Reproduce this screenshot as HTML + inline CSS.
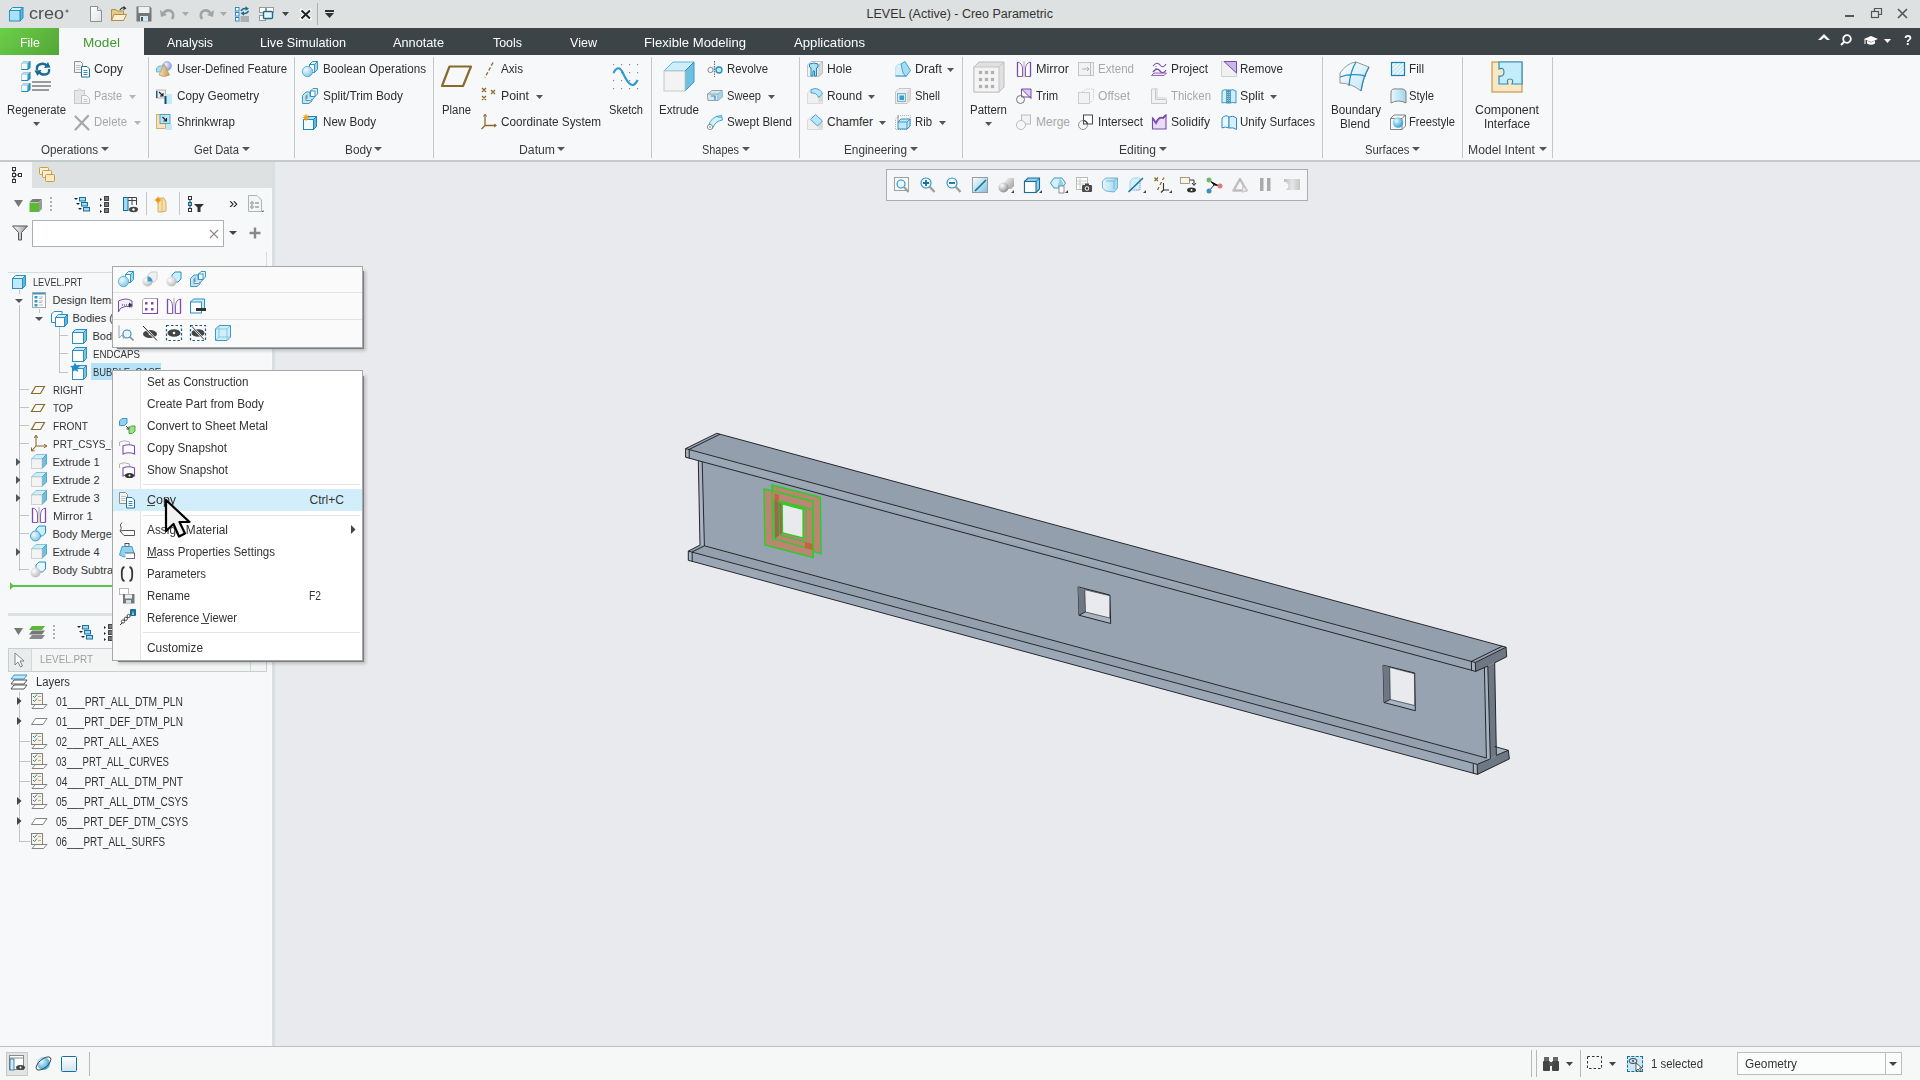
<!DOCTYPE html>
<html><head><meta charset="utf-8"><title>Creo Parametric</title>
<style>
html,body{margin:0;padding:0;width:1920px;height:1080px;overflow:hidden;background:#e9eaed;font-family:'Liberation Sans', sans-serif;}
span{white-space:pre;}
svg{overflow:visible;}
</style></head><body>
<svg width="0" height="0" style="position:absolute">
<defs>
<linearGradient id="gdoc" x1="0" y1="0" x2="1" y2="1"><stop offset="0" stop-color="#ffffff"/><stop offset="1" stop-color="#d9e3ea"/></linearGradient>
<radialGradient id="gsph" cx="0.35" cy="0.35" r="0.7"><stop offset="0" stop-color="#eef0ff"/><stop offset="1" stop-color="#8e9ad8"/></radialGradient>
<radialGradient id="gsph2" cx="0.35" cy="0.35" r="0.7"><stop offset="0" stop-color="#f2fbff"/><stop offset="1" stop-color="#7fc5e4"/></radialGradient>
<radialGradient id="gsph3" cx="0.35" cy="0.35" r="0.7"><stop offset="0" stop-color="#e5f8ff"/><stop offset="1" stop-color="#2f9fd2"/></radialGradient>
<radialGradient id="gsphw" cx="0.35" cy="0.35" r="0.7"><stop offset="0" stop-color="#ffffff"/><stop offset="1" stop-color="#b8b8b8"/></radialGradient>
<linearGradient id="gcone" x1="0" y1="0" x2="1" y2="0"><stop offset="0" stop-color="#f3dfb3"/><stop offset="1" stop-color="#c59d5a"/></linearGradient>
<linearGradient id="gbb" x1="0" y1="0" x2="1" y2="1"><stop offset="0" stop-color="#ffffff"/><stop offset="1" stop-color="#bfe6f6"/></linearGradient>
<linearGradient id="gsty" x1="0" y1="0" x2="1" y2="0"><stop offset="0" stop-color="#e8f7fd"/><stop offset="1" stop-color="#9fd6ee"/></linearGradient>
<pattern id="gfill" width="3" height="3" patternUnits="userSpaceOnUse" patternTransform="rotate(45)"><rect width="3" height="3" fill="#bfe6f6"/><rect width="1.2" height="3" fill="#ffffff"/></pattern>
<pattern id="ghatch" width="2" height="2" patternUnits="userSpaceOnUse"><rect width="2" height="2" fill="#5aa7cf"/><rect width="1" height="1" fill="#ffffff"/></pattern>
<linearGradient id="gfile" x1="0" y1="0" x2="1" y2="1"><stop offset="0" stop-color="#6fd04a"/><stop offset="1" stop-color="#4fa336"/></linearGradient>
</defs></svg>
<div style="position:absolute;left:0px;top:0px;width:1920px;height:28px;background:#dde1e1"></div>
<div style="position:absolute;left:0px;top:28px;width:1920px;height:27px;background:#3c4447"></div>
<div style="position:absolute;left:0px;top:28px;width:59px;height:27px;background:linear-gradient(135deg,#6ccf48,#52a637)"></div>
<div style="position:absolute;left:59px;top:28px;width:85px;height:27px;background:#f7f8fa"></div>
<div style="position:absolute;left:0px;top:55px;width:1920px;height:105px;background:#f7f8fa"></div>
<div style="position:absolute;left:0px;top:160px;width:1920px;height:2px;background:#c3cbcb"></div>
<div style="position:absolute;left:0px;top:162px;width:272px;height:884px;background:#f7f8fa"></div>
<div style="position:absolute;left:271px;top:162px;width:1px;height:884px;background:#f9fbfa"></div>
<div style="position:absolute;left:272px;top:162px;width:3px;height:884px;background:#d9dfde"></div>
<div style="position:absolute;left:275px;top:162px;width:1645px;height:884px;background:#e9eaed"></div>
<div style="position:absolute;left:0px;top:1046px;width:1920px;height:1px;background:#b7c2c2"></div>
<div style="position:absolute;left:0px;top:1047px;width:1920px;height:33px;background:#f6f8f8"></div>
<span style="position:absolute;left:866.5px;top:8px;font-size:12.5px;line-height:12.5px;color:#333;font-weight:400;">LEVEL (Active) - Creo Parametric</span>
<span style="position:absolute;left:29.0px;top:5px;font-size:16.5px;line-height:16.5px;color:#505050;font-weight:400;transform:scaleX(1.0900);transform-origin:0 0;">creo</span>
<span style="position:absolute;left:19.5px;top:36px;font-size:13px;line-height:13px;color:#ffffff;font-weight:400;transform:scaleX(0.9545);transform-origin:0 0;">File</span>
<span style="position:absolute;left:82.5px;top:36px;font-size:13px;line-height:13px;color:#3f9a2c;font-weight:400;transform:scaleX(1.0446);transform-origin:0 0;">Model</span>
<span style="position:absolute;left:166.5px;top:36px;font-size:13px;line-height:13px;color:#ffffff;font-weight:400;transform:scaleX(0.9500);transform-origin:0 0;">Analysis</span>
<span style="position:absolute;left:259.5px;top:36px;font-size:13px;line-height:13px;color:#ffffff;font-weight:400;transform:scaleX(0.9755);transform-origin:0 0;">Live Simulation</span>
<span style="position:absolute;left:392.5px;top:36px;font-size:13px;line-height:13px;color:#ffffff;font-weight:400;transform:scaleX(0.9799);transform-origin:0 0;">Annotate</span>
<span style="position:absolute;left:492.5px;top:36px;font-size:13px;line-height:13px;color:#ffffff;font-weight:400;transform:scaleX(0.9552);transform-origin:0 0;">Tools</span>
<span style="position:absolute;left:569.5px;top:36px;font-size:13px;line-height:13px;color:#ffffff;font-weight:400;transform:scaleX(0.9659);transform-origin:0 0;">View</span>
<span style="position:absolute;left:644.0px;top:36px;font-size:13px;line-height:13px;color:#ffffff;font-weight:400;transform:scaleX(1.0082);transform-origin:0 0;">Flexible Modeling</span>
<span style="position:absolute;left:793.5px;top:36px;font-size:13px;line-height:13px;color:#ffffff;font-weight:400;transform:scaleX(1.0127);transform-origin:0 0;">Applications</span>
<div style="position:absolute;left:148px;top:57px;width:1px;height:101px;background:#c4c8cb"></div>
<div style="position:absolute;left:294px;top:57px;width:1px;height:101px;background:#c4c8cb"></div>
<div style="position:absolute;left:433px;top:57px;width:1px;height:101px;background:#c4c8cb"></div>
<div style="position:absolute;left:651px;top:57px;width:1px;height:101px;background:#c4c8cb"></div>
<div style="position:absolute;left:799px;top:57px;width:1px;height:101px;background:#c4c8cb"></div>
<div style="position:absolute;left:962px;top:57px;width:1px;height:101px;background:#c4c8cb"></div>
<div style="position:absolute;left:1322px;top:57px;width:1px;height:101px;background:#c4c8cb"></div>
<div style="position:absolute;left:1462px;top:57px;width:1px;height:101px;background:#c4c8cb"></div>
<div style="position:absolute;left:1552px;top:57px;width:1px;height:101px;background:#c4c8cb"></div>
<span style="position:absolute;left:40.5px;top:144px;font-size:12px;line-height:12px;color:#3a3a3a;font-weight:400;transform:scaleX(0.9710);transform-origin:0 0;">Operations</span>
<span style="position:absolute;left:194.0px;top:144px;font-size:12px;line-height:12px;color:#3a3a3a;font-weight:400;transform:scaleX(0.9369);transform-origin:0 0;">Get Data</span>
<span style="position:absolute;left:345.0px;top:144px;font-size:12px;line-height:12px;color:#3a3a3a;font-weight:400;transform:scaleX(0.9869);transform-origin:0 0;">Body</span>
<span style="position:absolute;left:519.0px;top:144px;font-size:12px;line-height:12px;color:#3a3a3a;font-weight:400;transform:scaleX(1.0186);transform-origin:0 0;">Datum</span>
<span style="position:absolute;left:702.0px;top:144px;font-size:12px;line-height:12px;color:#3a3a3a;font-weight:400;transform:scaleX(0.9090);transform-origin:0 0;">Shapes</span>
<span style="position:absolute;left:844.0px;top:144px;font-size:12px;line-height:12px;color:#3a3a3a;font-weight:400;transform:scaleX(0.9834);transform-origin:0 0;">Engineering</span>
<span style="position:absolute;left:1119.0px;top:144px;font-size:12px;line-height:12px;color:#3a3a3a;font-weight:400;transform:scaleX(1.0081);transform-origin:0 0;">Editing</span>
<span style="position:absolute;left:1364.5px;top:144px;font-size:12px;line-height:12px;color:#3a3a3a;font-weight:400;transform:scaleX(0.9396);transform-origin:0 0;">Surfaces</span>
<span style="position:absolute;left:1468.0px;top:144px;font-size:12px;line-height:12px;color:#3a3a3a;font-weight:400;transform:scaleX(1.0144);transform-origin:0 0;">Model Intent</span>
<span style="position:absolute;left:7.0px;top:104px;font-size:12px;line-height:12px;color:#2e2e2e;font-weight:400;transform:scaleX(0.9407);transform-origin:0 0;">Regenerate</span>
<span style="position:absolute;left:442.0px;top:104px;font-size:12px;line-height:12px;color:#2e2e2e;font-weight:400;transform:scaleX(0.9445);transform-origin:0 0;">Plane</span>
<span style="position:absolute;left:609.0px;top:104px;font-size:12px;line-height:12px;color:#2e2e2e;font-weight:400;transform:scaleX(0.9267);transform-origin:0 0;">Sketch</span>
<span style="position:absolute;left:659.0px;top:104px;font-size:12px;line-height:12px;color:#2e2e2e;font-weight:400;transform:scaleX(0.9671);transform-origin:0 0;">Extrude</span>
<span style="position:absolute;left:970.0px;top:104px;font-size:12px;line-height:12px;color:#2e2e2e;font-weight:400;transform:scaleX(0.9560);transform-origin:0 0;">Pattern</span>
<span style="position:absolute;left:1330.5px;top:104px;font-size:12px;line-height:12px;color:#2e2e2e;font-weight:400;transform:scaleX(0.9732);transform-origin:0 0;">Boundary</span>
<span style="position:absolute;left:1340.0px;top:118px;font-size:12px;line-height:12px;color:#2e2e2e;font-weight:400;transform:scaleX(0.9771);transform-origin:0 0;">Blend</span>
<span style="position:absolute;left:1475.0px;top:104px;font-size:12px;line-height:12px;color:#2e2e2e;font-weight:400;transform:scaleX(1.0315);transform-origin:0 0;">Component</span>
<span style="position:absolute;left:1484.0px;top:118px;font-size:12px;line-height:12px;color:#2e2e2e;font-weight:400;transform:scaleX(0.9849);transform-origin:0 0;">Interface</span>
<span style="position:absolute;left:94.0px;top:63px;font-size:12px;line-height:12px;color:#2e2e2e;font-weight:400;transform:scaleX(1.0351);transform-origin:0 0;">Copy</span>
<span style="position:absolute;left:94.0px;top:90px;font-size:12px;line-height:12px;color:#a8a8a8;font-weight:400;transform:scaleX(0.9124);transform-origin:0 0;">Paste</span>
<span style="position:absolute;left:94.0px;top:116px;font-size:12px;line-height:12px;color:#a8a8a8;font-weight:400;transform:scaleX(0.9514);transform-origin:0 0;">Delete</span>
<span style="position:absolute;left:177.0px;top:63px;font-size:12px;line-height:12px;color:#2e2e2e;font-weight:400;transform:scaleX(0.9533);transform-origin:0 0;">User-Defined Feature</span>
<span style="position:absolute;left:177.0px;top:90px;font-size:12px;line-height:12px;color:#2e2e2e;font-weight:400;transform:scaleX(0.9758);transform-origin:0 0;">Copy Geometry</span>
<span style="position:absolute;left:177.0px;top:116px;font-size:12px;line-height:12px;color:#2e2e2e;font-weight:400;transform:scaleX(0.9662);transform-origin:0 0;">Shrinkwrap</span>
<span style="position:absolute;left:322.5px;top:63px;font-size:12px;line-height:12px;color:#2e2e2e;font-weight:400;transform:scaleX(0.9710);transform-origin:0 0;">Boolean Operations</span>
<span style="position:absolute;left:322.5px;top:90px;font-size:12px;line-height:12px;color:#2e2e2e;font-weight:400;transform:scaleX(0.9888);transform-origin:0 0;">Split/Trim Body</span>
<span style="position:absolute;left:322.5px;top:116px;font-size:12px;line-height:12px;color:#2e2e2e;font-weight:400;transform:scaleX(0.9689);transform-origin:0 0;">New Body</span>
<span style="position:absolute;left:501.0px;top:63px;font-size:12px;line-height:12px;color:#2e2e2e;font-weight:400;transform:scaleX(0.9704);transform-origin:0 0;">Axis</span>
<span style="position:absolute;left:501.0px;top:90px;font-size:12px;line-height:12px;color:#2e2e2e;font-weight:400;transform:scaleX(1.0234);transform-origin:0 0;">Point</span>
<span style="position:absolute;left:501.0px;top:116px;font-size:12px;line-height:12px;color:#2e2e2e;font-weight:400;transform:scaleX(0.9799);transform-origin:0 0;">Coordinate System</span>
<span style="position:absolute;left:727.0px;top:63px;font-size:12px;line-height:12px;color:#2e2e2e;font-weight:400;transform:scaleX(0.9456);transform-origin:0 0;">Revolve</span>
<span style="position:absolute;left:727.0px;top:90px;font-size:12px;line-height:12px;color:#2e2e2e;font-weight:400;transform:scaleX(0.9264);transform-origin:0 0;">Sweep</span>
<span style="position:absolute;left:727.0px;top:116px;font-size:12px;line-height:12px;color:#2e2e2e;font-weight:400;transform:scaleX(0.9645);transform-origin:0 0;">Swept Blend</span>
<span style="position:absolute;left:827.0px;top:63px;font-size:12px;line-height:12px;color:#2e2e2e;font-weight:400;transform:scaleX(1.0127);transform-origin:0 0;">Hole</span>
<span style="position:absolute;left:827.0px;top:90px;font-size:12px;line-height:12px;color:#2e2e2e;font-weight:400;transform:scaleX(0.9894);transform-origin:0 0;">Round</span>
<span style="position:absolute;left:827.0px;top:116px;font-size:12px;line-height:12px;color:#2e2e2e;font-weight:400;">Chamfer</span>
<span style="position:absolute;left:915.0px;top:63px;font-size:12px;line-height:12px;color:#2e2e2e;font-weight:400;transform:scaleX(1.0378);transform-origin:0 0;">Draft</span>
<span style="position:absolute;left:915.0px;top:90px;font-size:12px;line-height:12px;color:#2e2e2e;font-weight:400;transform:scaleX(0.9368);transform-origin:0 0;">Shell</span>
<span style="position:absolute;left:915.0px;top:116px;font-size:12px;line-height:12px;color:#2e2e2e;font-weight:400;transform:scaleX(0.9436);transform-origin:0 0;">Rib</span>
<span style="position:absolute;left:1036.0px;top:63px;font-size:12px;line-height:12px;color:#2e2e2e;font-weight:400;transform:scaleX(1.0534);transform-origin:0 0;">Mirror</span>
<span style="position:absolute;left:1036.0px;top:90px;font-size:12px;line-height:12px;color:#2e2e2e;font-weight:400;transform:scaleX(0.9343);transform-origin:0 0;">Trim</span>
<span style="position:absolute;left:1036.0px;top:116px;font-size:12px;line-height:12px;color:#a8a8a8;font-weight:400;">Merge</span>
<span style="position:absolute;left:1098.0px;top:63px;font-size:12px;line-height:12px;color:#a8a8a8;font-weight:400;transform:scaleX(0.9636);transform-origin:0 0;">Extend</span>
<span style="position:absolute;left:1098.0px;top:90px;font-size:12px;line-height:12px;color:#a8a8a8;font-weight:400;transform:scaleX(1.0064);transform-origin:0 0;">Offset</span>
<span style="position:absolute;left:1098.0px;top:116px;font-size:12px;line-height:12px;color:#2e2e2e;font-weight:400;transform:scaleX(0.9776);transform-origin:0 0;">Intersect</span>
<span style="position:absolute;left:1171.0px;top:63px;font-size:12px;line-height:12px;color:#2e2e2e;font-weight:400;transform:scaleX(0.9904);transform-origin:0 0;">Project</span>
<span style="position:absolute;left:1171.0px;top:90px;font-size:12px;line-height:12px;color:#a8a8a8;font-weight:400;transform:scaleX(0.9517);transform-origin:0 0;">Thicken</span>
<span style="position:absolute;left:1171.0px;top:116px;font-size:12px;line-height:12px;color:#2e2e2e;font-weight:400;transform:scaleX(1.0081);transform-origin:0 0;">Solidify</span>
<span style="position:absolute;left:1240.0px;top:63px;font-size:12px;line-height:12px;color:#2e2e2e;font-weight:400;transform:scaleX(0.9622);transform-origin:0 0;">Remove</span>
<span style="position:absolute;left:1240.0px;top:90px;font-size:12px;line-height:12px;color:#2e2e2e;font-weight:400;transform:scaleX(1.0281);transform-origin:0 0;">Split</span>
<span style="position:absolute;left:1240.0px;top:116px;font-size:12px;line-height:12px;color:#2e2e2e;font-weight:400;transform:scaleX(0.9612);transform-origin:0 0;">Unify Surfaces</span>
<span style="position:absolute;left:1409.0px;top:63px;font-size:12px;line-height:12px;color:#2e2e2e;font-weight:400;transform:scaleX(0.9786);transform-origin:0 0;">Fill</span>
<span style="position:absolute;left:1409.0px;top:90px;font-size:12px;line-height:12px;color:#2e2e2e;font-weight:400;transform:scaleX(0.9368);transform-origin:0 0;">Style</span>
<span style="position:absolute;left:1409.0px;top:116px;font-size:12px;line-height:12px;color:#2e2e2e;font-weight:400;transform:scaleX(0.9319);transform-origin:0 0;">Freestyle</span>
<div style="position:absolute;left:91px;top:363px;width:70px;height:17px;background:#b5e2f8"></div>
<span style="position:absolute;left:32.5px;top:277px;font-size:11px;line-height:11px;color:#333333;font-weight:400;transform:scaleX(0.8374);transform-origin:0 0;">LEVEL.PRT</span>
<span style="position:absolute;left:52.5px;top:295px;font-size:11px;line-height:11px;color:#333333;font-weight:400;">Design Items</span>
<span style="position:absolute;left:72.5px;top:313px;font-size:11px;line-height:11px;color:#333333;font-weight:400;">Bodies (3)</span>
<span style="position:absolute;left:92.5px;top:331px;font-size:11px;line-height:11px;color:#333333;font-weight:400;">Body 1</span>
<span style="position:absolute;left:92.5px;top:349px;font-size:11px;line-height:11px;color:#333333;font-weight:400;transform:scaleX(0.8837);transform-origin:0 0;">ENDCAPS</span>
<span style="position:absolute;left:92.5px;top:367px;font-size:11px;line-height:11px;color:#333333;font-weight:400;transform:scaleX(0.8555);transform-origin:0 0;">BUBBLE_CASE</span>
<span style="position:absolute;left:52.5px;top:385px;font-size:11px;line-height:11px;color:#333333;font-weight:400;transform:scaleX(0.8909);transform-origin:0 0;">RIGHT</span>
<span style="position:absolute;left:52.5px;top:403px;font-size:11px;line-height:11px;color:#333333;font-weight:400;transform:scaleX(0.8920);transform-origin:0 0;">TOP</span>
<span style="position:absolute;left:52.5px;top:421px;font-size:11px;line-height:11px;color:#333333;font-weight:400;transform:scaleX(0.9237);transform-origin:0 0;">FRONT</span>
<span style="position:absolute;left:52.5px;top:439px;font-size:11px;line-height:11px;color:#333333;font-weight:400;transform:scaleX(0.9070);transform-origin:0 0;">PRT_CSYS_DEF</span>
<span style="position:absolute;left:52.5px;top:457px;font-size:11px;line-height:11px;color:#333333;font-weight:400;">Extrude 1</span>
<span style="position:absolute;left:52.5px;top:475px;font-size:11px;line-height:11px;color:#333333;font-weight:400;">Extrude 2</span>
<span style="position:absolute;left:52.5px;top:493px;font-size:11px;line-height:11px;color:#333333;font-weight:400;">Extrude 3</span>
<span style="position:absolute;left:52.5px;top:511px;font-size:11px;line-height:11px;color:#333333;font-weight:400;transform:scaleX(1.0557);transform-origin:0 0;">Mirror 1</span>
<span style="position:absolute;left:52.5px;top:529px;font-size:11px;line-height:11px;color:#333333;font-weight:400;">Body Merge 1</span>
<span style="position:absolute;left:52.5px;top:547px;font-size:11px;line-height:11px;color:#333333;font-weight:400;">Extrude 4</span>
<span style="position:absolute;left:52.5px;top:565px;font-size:11px;line-height:11px;color:#333333;font-weight:400;">Body Subtract 1</span>
<span style="position:absolute;left:36.0px;top:676px;font-size:12px;line-height:12px;color:#333333;font-weight:400;transform:scaleX(0.9436);transform-origin:0 0;">Layers</span>
<span style="position:absolute;left:56.0px;top:695.5px;font-size:12px;line-height:12px;color:#333333;font-weight:400;transform:scaleX(0.8588);transform-origin:0 0;">01___PRT_ALL_DTM_PLN</span>
<span style="position:absolute;left:56.0px;top:715.5px;font-size:12px;line-height:12px;color:#333333;font-weight:400;transform:scaleX(0.8438);transform-origin:0 0;">01___PRT_DEF_DTM_PLN</span>
<span style="position:absolute;left:56.0px;top:735.5px;font-size:12px;line-height:12px;color:#333333;font-weight:400;transform:scaleX(0.8315);transform-origin:0 0;">02___PRT_ALL_AXES</span>
<span style="position:absolute;left:56.0px;top:755.5px;font-size:12px;line-height:12px;color:#333333;font-weight:400;transform:scaleX(0.7977);transform-origin:0 0;">03___PRT_ALL_CURVES</span>
<span style="position:absolute;left:56.0px;top:775.5px;font-size:12px;line-height:12px;color:#333333;font-weight:400;transform:scaleX(0.8550);transform-origin:0 0;">04___PRT_ALL_DTM_PNT</span>
<span style="position:absolute;left:56.0px;top:795.5px;font-size:12px;line-height:12px;color:#333333;font-weight:400;transform:scaleX(0.8397);transform-origin:0 0;">05___PRT_ALL_DTM_CSYS</span>
<span style="position:absolute;left:56.0px;top:815.5px;font-size:12px;line-height:12px;color:#333333;font-weight:400;transform:scaleX(0.8258);transform-origin:0 0;">05___PRT_DEF_DTM_CSYS</span>
<span style="position:absolute;left:56.0px;top:835.5px;font-size:12px;line-height:12px;color:#333333;font-weight:400;transform:scaleX(0.8224);transform-origin:0 0;">06___PRT_ALL_SURFS</span>
<span style="position:absolute;left:1651.0px;top:1058px;font-size:12px;line-height:12px;color:#333;font-weight:400;transform:scaleX(0.9506);transform-origin:0 0;">1 selected</span>
<div style="position:absolute;left:1737px;top:1052px;width:165px;height:23px;background:#fbfcfc;border:1px solid #b9bdbd;box-sizing:border-box"></div>
<div style="position:absolute;left:1885px;top:1053px;width:1px;height:21px;background:#b9bdbd"></div>
<span style="position:absolute;left:1745.0px;top:1058px;font-size:12px;line-height:12px;color:#333;font-weight:400;transform:scaleX(0.9870);transform-origin:0 0;">Geometry</span>
<div style="position:absolute;left:886px;top:169px;width:422px;height:32px;background:#f5f6f8;border:1px solid #a9adb0;box-sizing:border-box"></div>
<svg style="position:absolute;left:9px;top:7px;" width="15" height="15" viewBox="0 0 15 15"><path d="M0.5 3.5 L3.5 0.5 L14.0 0.5 L11.0 3.5 Z" fill="#d4f2fc" stroke="#2a8fc2" stroke-width="1" stroke-linejoin="round"/><path d="M11.0 3.5 L14.0 0.5 L14.0 11.0 L11.0 14.0 Z" fill="#5db3d9" stroke="#2a8fc2" stroke-width="1" stroke-linejoin="round"/><rect x="0.5" y="3.5" width="10.5" height="10.5" fill="#a8e2f6" stroke="#2a8fc2" stroke-width="1"/></svg>
<svg style="position:absolute;left:65px;top:9px;" width="4" height="4" viewBox="0 0 4 4"><circle cx="2" cy="2" r="1.5" fill="#777"/></svg>
<svg style="position:absolute;left:88px;top:6px;" width="16" height="16" viewBox="0 0 16 16"><path d="M2.5 0.5 H9.5 L13.5 4.5 V15.5 H2.5 Z" fill="url(#gdoc)" stroke="#8f8f8f"/><path d="M9.5 0.5 V4.5 H13.5" fill="#dfe8ee" stroke="#8f8f8f"/></svg>
<svg style="position:absolute;left:111px;top:6px;" width="16" height="16" viewBox="0 0 16 16"><path d="M0.5 3.5 H5 L6.5 5 H12.5 V14.5 H0.5 Z" fill="#e7c98a" stroke="#b58d45"/><path d="M3 8.5 H15.5 L12.5 14.5 H0.5 Z" fill="#fbf0d7" stroke="#b58d45"/><path d="M9 4 Q11 0.5 14 2 M12.5 0.5 L14.5 2.3 L12.2 3.6" fill="none" stroke="#333" stroke-width="1.2"/></svg>
<svg style="position:absolute;left:136px;top:6px;" width="16" height="16" viewBox="0 0 16 16"><path d="M0.5 0.5 H14 L15.5 2 V15.5 H0.5 Z" fill="#777"/><rect x="2.5" y="1" width="11" height="6" fill="#f0f0f0"/><rect x="4" y="10" width="8" height="5.5" fill="#cde7f3"/><rect x="5" y="11" width="2" height="4" fill="#555"/></svg>
<svg style="position:absolute;left:160px;top:6px;" width="16" height="16" viewBox="0 0 16 16"><path d="M3 8 Q6 3 11 5 Q15 8 12 13" fill="none" stroke="#a3a3a3" stroke-width="2.6"/><path d="M0 4 L1 11 L7 9 Z" fill="#a3a3a3"/></svg>
<svg style="position:absolute;left:182px;top:12px;" width="7" height="4" viewBox="0 0 7 4"><path d="M0 0 L7 0 L3.5 4 Z" fill="#a8a8a8"/></svg>
<svg style="position:absolute;left:198px;top:6px;" width="16" height="16" viewBox="0 0 16 16"><path d="M13 8 Q10 3 5 5 Q1 8 4 13" fill="none" stroke="#a3a3a3" stroke-width="2.6"/><path d="M16 4 L15 11 L9 9 Z" fill="#a3a3a3"/></svg>
<svg style="position:absolute;left:220px;top:12px;" width="7" height="4" viewBox="0 0 7 4"><path d="M0 0 L7 0 L3.5 4 Z" fill="#a8a8a8"/></svg>
<svg style="position:absolute;left:235px;top:6px;" width="16" height="16" viewBox="0 0 16 16"><rect x="0.5" y="1.5" width="3.5" height="3.5" fill="#fff" stroke="#1f86bf" stroke-width="0.9"/><rect x="0.5" y="6.5" width="3.5" height="3.5" fill="#fff" stroke="#1f86bf" stroke-width="0.9"/><rect x="0.5" y="11.5" width="3.5" height="3.5" fill="#fff" stroke="#1f86bf" stroke-width="0.9"/><path d="M6 5 Q7.5 2 11 2.5" fill="none" stroke="#1b6b92" stroke-width="1.5"/><path d="M10.5 0.3 L14 2.8 L10.5 4.8 Z" fill="#1b6b92"/><path d="M13.5 5 Q12 8 8.5 7.5" fill="none" stroke="#1b6b92" stroke-width="1.5"/><path d="M9 9.7 L5.5 7.2 L9 5.2 Z" fill="#1b6b92"/><path d="M5.5 11 H14 M5.5 13 H14 M5.5 15 H14" stroke="#666" stroke-width="0.8"/></svg>
<svg style="position:absolute;left:259px;top:7px;" width="16" height="16" viewBox="0 0 16 16"><rect x="0.5" y="0.5" width="6" height="5" fill="#fff" stroke="#999"/><rect x="7.5" y="0.5" width="7" height="5" fill="#fff" stroke="#999"/><rect x="0.5" y="8.5" width="6" height="5" fill="#fff" stroke="#999"/><rect x="4.5" y="4.5" width="9" height="7" rx="1" fill="#e8f3f8" stroke="#1b6b92" stroke-width="1.4"/></svg>
<svg style="position:absolute;left:282px;top:12px;" width="7" height="4" viewBox="0 0 7 4"><path d="M0 0 L7 0 L3.5 4 Z" fill="#444"/></svg>
<svg style="position:absolute;left:300px;top:9px;" width="12" height="12" viewBox="0 0 12 12"><path d="M1.5 1.5 L10 9.5 M10 1.5 L1.5 9.5" stroke="#fff" stroke-width="4" stroke-linecap="round"/><path d="M1.5 1.5 L10 9.5 M10 1.5 L1.5 9.5" stroke="#222" stroke-width="2"/></svg>
<div style="position:absolute;left:317px;top:3px;width:1px;height:22px;background:#aab0b0"></div>
<div style="position:absolute;left:325px;top:10px;width:9px;height:1.5px;background:#333"></div>
<svg style="position:absolute;left:325px;top:13px;" width="9" height="5" viewBox="0 0 9 5"><path d="M0 0 L9 0 L4.5 5 Z" fill="#333"/></svg>
<div style="position:absolute;left:1845px;top:15px;width:9px;height:2px;background:#555"></div>
<svg style="position:absolute;left:1871px;top:8px;" width="12" height="11" viewBox="0 0 12 11"><rect x="0.5" y="3.5" width="7" height="6" fill="none" stroke="#555" stroke-width="1.2"/><path d="M3.5 3.5 V0.5 H10.5 V6.5 H7.5" fill="none" stroke="#555" stroke-width="1.2"/></svg>
<svg style="position:absolute;left:1897px;top:8px;" width="11" height="11" viewBox="0 0 11 11"><path d="M1 1 L10 10 M10 1 L1 10" stroke="#555" stroke-width="1.6"/></svg>
<svg style="position:absolute;left:1818px;top:33px;" width="12" height="8" viewBox="0 0 12 8"><path d="M0 7 L6 1 L12 7 H9 L6 4.5 L3 7 Z" fill="#fff"/></svg>
<svg style="position:absolute;left:1840px;top:34px;" width="12" height="12" viewBox="0 0 12 12"><circle cx="7" cy="5" r="3.8" fill="none" stroke="#fff" stroke-width="1.8"/><path d="M4.5 7.5 L1 11" stroke="#fff" stroke-width="2"/></svg>
<svg style="position:absolute;left:1864px;top:35px;" width="14" height="11" viewBox="0 0 14 11"><path d="M0 4 L7 1 L14 4 L7 7 Z" fill="#fff"/><path d="M3 5.5 V8.5 Q7 11 11 8.5 V5.5 L7 7.5 Z" fill="#fff"/><path d="M1 4 V9" stroke="#fff"/></svg>
<svg style="position:absolute;left:1884px;top:39px;" width="7" height="4" viewBox="0 0 7 4"><path d="M0 0 L7 0 L3.5 4 Z" fill="#fff"/></svg>
<span style="position:absolute;left:1904.0px;top:33px;font-size:14px;line-height:14px;color:#fff;font-weight:700;transform:scaleX(0.9343);transform-origin:0 0;">?</span>
<svg style="position:absolute;left:20px;top:61px;" width="32" height="32" viewBox="0 0 32 32"><path d="M1 2.5 L3.5 0 H10 V6.5 L7.5 9 H1 Z" fill="#a8e0f4"/><rect x="1.5" y="3" width="6" height="5.5" fill="#eefbff"/><path d="M7.5 2.5 L10 0 V6.5 L7.5 9 Z" fill="#3d9bc7"/><path d="M1.5 9 V2.5 L3.5 0.5 H10" fill="none" stroke="#c0c0c0" stroke-width="0.9"/><path d="M1.5 8.5 H7.5 L10 6.5 V0" fill="none" stroke="#1f86bf" stroke-width="1.1"/><path d="M1 13.5 L3.5 11 H10 V17.5 L7.5 20 H1 Z" fill="#a8e0f4"/><rect x="1.5" y="14" width="6" height="5.5" fill="#eefbff"/><path d="M7.5 13.5 L10 11 V17.5 L7.5 20 Z" fill="#3d9bc7"/><path d="M1.5 20 V13.5 L3.5 11.5 H10" fill="none" stroke="#c0c0c0" stroke-width="0.9"/><path d="M1.5 19.5 H7.5 L10 17.5 V11" fill="none" stroke="#1f86bf" stroke-width="1.1"/><path d="M1 24.5 L3.5 22 H10 V28.5 L7.5 31 H1 Z" fill="#a8e0f4"/><rect x="1.5" y="25" width="6" height="5.5" fill="#eefbff"/><path d="M7.5 24.5 L10 22 V28.5 L7.5 31 Z" fill="#3d9bc7"/><path d="M1.5 31 V24.5 L3.5 22.5 H10" fill="none" stroke="#c0c0c0" stroke-width="0.9"/><path d="M1.5 30.5 H7.5 L10 28.5 V22" fill="none" stroke="#1f86bf" stroke-width="1.1"/><path d="M17 9 Q16 4 21 3 Q25 2 27 5" fill="none" stroke="#1b6b92" stroke-width="2.4"/><path d="M24 7 L30.5 6.5 L28 1 Z" fill="#1b6b92"/><path d="M29 8 Q30 13 25 13.5 Q21 14 19 11" fill="none" stroke="#1b6b92" stroke-width="2.4"/><path d="M21.5 9 L14.5 9.5 L17.5 15 Z" fill="#1b6b92"/><path d="M12 21 H31 M12 25 H31 M12 29 H29" stroke="#9a9a9a" stroke-width="2"/></svg>
<svg style="position:absolute;left:33px;top:122px;" width="7" height="4" viewBox="0 0 7 4"><path d="M0 0 L7 0 L3.5 4 Z" fill="#555"/></svg>
<svg style="position:absolute;left:74px;top:61px;" width="16" height="16" viewBox="0 0 16 16"><path d="M0.5 0.5 H6.5 L8.5 2.5 V11.5 H0.5 Z" fill="#f4f4f4" stroke="#909090"/><path d="M2 4.5 H6.5 M2 6.5 H6.5 M2 8.5 H6.5" stroke="#b5b5b5" stroke-width="0.8"/><path d="M7.5 5.5 H13 L15.5 8 V16 H7.5 Z" fill="#ffffff" stroke="#1d6f9a"/><path d="M9.5 9.5 H13.5 M9.5 11.5 H13.5 M9.5 13.5 H13.5" stroke="#2b8fc4"/></svg>
<svg style="position:absolute;left:74px;top:88px;" width="16" height="16" viewBox="0 0 16 16"><rect x="0.5" y="2.5" width="10" height="13" fill="#e6e6e6" stroke="#c9c9c9"/><path d="M3.5 2.5 L5.5 0.5 L7.5 2.5" fill="#f5f5f5" stroke="#c9c9c9"/><path d="M7.5 7.5 H12.5 L15.5 10.5 V15.5 H7.5 Z" fill="#f7f7f7" stroke="#c0c0c0"/><path d="M9.5 11.5 H13.5 M9.5 13.5 H13.5" stroke="#c8c8c8"/></svg>
<svg style="position:absolute;left:129px;top:95px;" width="7" height="4" viewBox="0 0 7 4"><path d="M0 0 L7 0 L3.5 4 Z" fill="#b5b5b5"/></svg>
<svg style="position:absolute;left:74px;top:115px;" width="16" height="16" viewBox="0 0 16 16"><path d="M1.5 1.5 L14.5 14.5 M14 1 L1.5 14.5" stroke="#a7a7a7" stroke-width="2.2" stroke-linecap="round"/></svg>
<svg style="position:absolute;left:134px;top:121px;" width="7" height="4" viewBox="0 0 7 4"><path d="M0 0 L7 0 L3.5 4 Z" fill="#b5b5b5"/></svg>
<svg style="position:absolute;left:156px;top:61px;" width="16" height="16" viewBox="0 0 16 16"><circle cx="11" cy="5" r="4.5" fill="url(#gsph)" stroke="#8d9ad4" stroke-width="0.6"/><path d="M0.5 7 L3 5 H9 V11 H0.5 Z" fill="#a9dcef" stroke="#5aaed3" stroke-width="0.8"/><path d="M8 3 L13.5 14 Q8 17 3 14 Z" fill="url(#gcone)" stroke="#b38a4a" stroke-width="0.6"/></svg>
<svg style="position:absolute;left:156px;top:88px;" width="16" height="16" viewBox="0 0 16 16"><rect x="0.5" y="2" width="9" height="8" fill="#eee" stroke="#aaa" stroke-width="0.8"/><path d="M3 4 L7 8 M7 5 V8 H4" stroke="#222" stroke-width="1.1" fill="none"/><rect x="0" y="3" width="1.5" height="7" fill="#1b5f86"/><rect x="9" y="6" width="7" height="10" fill="#c3ecfb"/><rect x="8.5" y="8" width="2" height="8" fill="#0f4f72"/></svg>
<svg style="position:absolute;left:156px;top:114px;" width="16" height="16" viewBox="0 0 16 16"><rect x="0.5" y="0.5" width="9" height="14" fill="#f6e3bb" stroke="#c6a45a" stroke-width="0.8"/><rect x="4" y="0.5" width="10" height="9" fill="#b7e3f4" stroke="#3d93bd" stroke-width="0.8"/><path d="M6.5 3 L10.5 7 M10.5 4 V7 H7.5" stroke="#222" stroke-width="1.1" fill="none"/><rect x="10" y="10" width="6" height="6" fill="#bfe9fa"/></svg>
<svg style="position:absolute;left:302px;top:61px;" width="16" height="16" viewBox="0 0 16 16"><path d="M7.5 3.5 L10.5 0.5 H15.5 V8.5 L12.5 11.5 Z" fill="#9fd6ee" stroke="#2a8fc2" stroke-width="0.9"/><path d="M7.5 3.5 L10.5 0.5 H15.5 L12.5 3.5 Z" fill="#d8f3fc" stroke="#2a8fc2" stroke-width="0.9"/><rect x="7.5" y="3.5" width="5" height="8" fill="#fff" stroke="#2a8fc2" stroke-width="0.9"/><circle cx="5.5" cy="10.5" r="5.2" fill="url(#gsph2)" stroke="#3a9ccc" stroke-width="0.7"/></svg>
<svg style="position:absolute;left:302px;top:88px;" width="16" height="16" viewBox="0 0 16 16"><path d="M8.5 3 L11 0.5 H15.5 V6 L13 8.5 H8.5 Z" fill="#d8f3fc" stroke="#2a8fc2" stroke-width="0.9"/><rect x="8.5" y="3" width="4.5" height="5.5" fill="#fff" stroke="#2a8fc2" stroke-width="0.9"/><path d="M0.5 7.5 L4 4 H8 V8.5 H13 L10 12 V13 L7 15.5 H0.5 Z" fill="#bfe6f6" stroke="#2a8fc2" stroke-width="0.9"/><path d="M3.5 8 L5.5 6 V11 H10.5 L8.5 13 H3.5 Z" fill="#6f95ab"/><path d="M4.5 11.5 H9" stroke="#e8e8e8" stroke-width="1"/></svg>
<svg style="position:absolute;left:302px;top:114px;" width="16" height="16" viewBox="0 0 16 16"><path d="M1.5 5.5 L4.5 2.5 L14.5 2.5 L11.5 5.5 Z" fill="#a9e0f4" stroke="#1f86bf" stroke-width="1" stroke-linejoin="round"/><path d="M11.5 5.5 L14.5 2.5 L14.5 12.5 L11.5 15.5 Z" fill="#62b6da" stroke="#1f86bf" stroke-width="1" stroke-linejoin="round"/><rect x="1.5" y="5.5" width="10" height="10" fill="#eefbff" stroke="#1f86bf" stroke-width="1"/><circle cx="4" cy="3.5" r="2.2" fill="#f7b731"/><path d="M4 0 V7 M0.5 3.5 H7.5 M1.5 1 L6.5 6 M6.5 1 L1.5 6" stroke="#f39c12" stroke-width="0.8"/></svg>
<svg style="position:absolute;left:441px;top:65px;" width="32" height="23" viewBox="0 0 32 23"><path d="M8.5 1.5 H30 L22 21 H1 Z" fill="none" stroke="#8a6a2a" stroke-width="2.2" stroke-linejoin="round"/></svg>
<svg style="position:absolute;left:481px;top:62px;" width="16" height="16" viewBox="0 0 16 16"><path d="M12 0.5 L4 15.5" stroke="#8a6a2a" stroke-width="1.3" stroke-dasharray="3.5 2"/></svg>
<svg style="position:absolute;left:481px;top:87px;" width="16" height="16" viewBox="0 0 16 16"><path d="M1 1 L5 5 M5 1 L1 5 M10 3 L14 7 M14 3 L10 7 M1 9 L5 13 M5 9 L1 13" stroke="#8a6a2a" stroke-width="1.3"/></svg>
<svg style="position:absolute;left:536px;top:95px;" width="7" height="4" viewBox="0 0 7 4"><path d="M0 0 L7 0 L3.5 4 Z" fill="#555"/></svg>
<svg style="position:absolute;left:481px;top:114px;" width="16" height="16" viewBox="0 0 16 16"><path d="M4 1 V11.5 H15 M4 11.5 L0.5 15" fill="none" stroke="#8a6a2a" stroke-width="1.3"/><path d="M2.5 2.5 L4 0 L5.5 2.5 M13 10 L15.5 11.5 L13 13" fill="none" stroke="#8a6a2a" stroke-width="1"/></svg>
<svg style="position:absolute;left:612px;top:63px;" width="28" height="28" viewBox="0 0 28 28"><rect x="1" y="1" width="1.2" height="1.2" fill="#8a8a8a"/><rect x="9" y="1" width="1.2" height="1.2" fill="#8a8a8a"/><rect x="17" y="1" width="1.2" height="1.2" fill="#8a8a8a"/><rect x="25" y="1" width="1.2" height="1.2" fill="#8a8a8a"/><rect x="1" y="9" width="1.2" height="1.2" fill="#8a8a8a"/><rect x="9" y="9" width="1.2" height="1.2" fill="#8a8a8a"/><rect x="17" y="9" width="1.2" height="1.2" fill="#8a8a8a"/><rect x="25" y="9" width="1.2" height="1.2" fill="#8a8a8a"/><rect x="1" y="17" width="1.2" height="1.2" fill="#8a8a8a"/><rect x="9" y="17" width="1.2" height="1.2" fill="#8a8a8a"/><rect x="17" y="17" width="1.2" height="1.2" fill="#8a8a8a"/><rect x="25" y="17" width="1.2" height="1.2" fill="#8a8a8a"/><rect x="1" y="25" width="1.2" height="1.2" fill="#8a8a8a"/><rect x="9" y="25" width="1.2" height="1.2" fill="#8a8a8a"/><rect x="17" y="25" width="1.2" height="1.2" fill="#8a8a8a"/><rect x="25" y="25" width="1.2" height="1.2" fill="#8a8a8a"/><path d="M1.5 10 Q6 1 10.5 9 Q14 17 17 20 Q22 25 25.5 17" fill="none" stroke="#2a9ad6" stroke-width="2"/></svg>
<svg style="position:absolute;left:663px;top:61px;" width="32" height="32" viewBox="0 0 32 32"><path d="M1 10 L10 1 H31 L22 10 Z" fill="#cdeefb" stroke="#65b6d9" stroke-width="1"/><path d="M22 10 L31 1 V21 L22 30 Z" fill="#6fc0e0" stroke="#3d9bc7" stroke-width="1"/><rect x="1" y="10" width="21" height="20" fill="#f3f3f3" stroke="#c8c8c8" stroke-width="1"/><path d="M22 10 L31 1" stroke="#2b8fc2"/></svg>
<svg style="position:absolute;left:707px;top:61px;" width="16" height="16" viewBox="0 0 16 16"><path d="M5 5 H12 V11 H5 Z" fill="#cdeffb"/><circle cx="3.5" cy="9" r="2.6" fill="#fff" stroke="#777" stroke-width="0.9"/><circle cx="12" cy="9" r="3" fill="#bfe8f8" stroke="#2a8fc2" stroke-width="1.3"/><path d="M7.5 0 V16" stroke="#444" stroke-width="0.8" stroke-dasharray="1.5 1"/></svg>
<svg style="position:absolute;left:707px;top:87px;" width="16" height="16" viewBox="0 0 16 16"><path d="M0.5 7 L5 3.5 H15 L15.5 7 V10 L11 13.5 H1 L0.5 10.5 Z" fill="#d8e8ef" stroke="#7d8f99" stroke-width="0.8"/><path d="M0.5 7 H11 L15.5 3.5 M11 7 V13.5" fill="none" stroke="#7d8f99" stroke-width="0.8"/><path d="M11 7 L15.5 3.5 V10 L11 13.5 Z" fill="#9fd3ea"/><path d="M4 9 H8 V13" fill="none" stroke="#2a8fc2" stroke-width="1.2"/></svg>
<svg style="position:absolute;left:768px;top:95px;" width="7" height="4" viewBox="0 0 7 4"><path d="M0 0 L7 0 L3.5 4 Z" fill="#555"/></svg>
<svg style="position:absolute;left:707px;top:114px;" width="16" height="16" viewBox="0 0 16 16"><path d="M1.5 12 Q4 2 14.5 1.5 L15.5 6 Q8 7 5.5 14.5 Z" fill="#d2f0fb" stroke="#3d9bc7" stroke-width="0.9"/><path d="M9 2 Q11 4 15 3" fill="none" stroke="#3d9bc7" stroke-width="0.8"/><circle cx="3" cy="13" r="2.6" fill="#fff" stroke="#777" stroke-width="0.8"/><circle cx="3" cy="13" r="0.7" fill="#555"/></svg>
<svg style="position:absolute;left:807px;top:61px;" width="16" height="16" viewBox="0 0 16 16"><path d="M0.5 4 L4 0.5 H15.5 V12 L12 15.5 H0.5 Z" fill="#f2f2f2" stroke="#b9b9b9" stroke-width="0.8"/><path d="M12 4 L15.5 0.5 V12 L12 15.5 Z" fill="#dcdcdc" stroke="#b9b9b9" stroke-width="0.8"/><path d="M2.5 3 Q7 1 11 3 V6 L9.5 7 V15 H7.5 V10 H6 V15 H4 V7 L2.5 6 Z" fill="#aee0f3" stroke="#1f86bf" stroke-width="1"/></svg>
<svg style="position:absolute;left:807px;top:88px;" width="16" height="16" viewBox="0 0 16 16"><path d="M0.5 5 L4 1.5 H8 L15.5 8 V15.5 H0.5 Z" fill="#f0f0f0" stroke="#d4d4d4" stroke-width="0.8"/><path d="M11.5 8.5 L15.5 5 V13 L11.5 15.5 Z" fill="#dadada"/><path d="M4 1.5 L8 0.5 Q14 1 15.5 6 L11.5 9.5 Q10 4.5 4 5 Z" fill="#b9e6f7" stroke="#3d9bc7" stroke-width="0.9"/></svg>
<svg style="position:absolute;left:868px;top:95px;" width="7" height="4" viewBox="0 0 7 4"><path d="M0 0 L7 0 L3.5 4 Z" fill="#555"/></svg>
<svg style="position:absolute;left:807px;top:114px;" width="16" height="16" viewBox="0 0 16 16"><path d="M0.5 6 L4 2.5 H7 L15.5 9 V15.5 H0.5 Z" fill="#f0f0f0" stroke="#d4d4d4" stroke-width="0.8"/><path d="M11.5 11 L15.5 8 V14 L11.5 15.5 Z" fill="#dadada"/><path d="M3.5 5.5 L8.5 0.5 L15.5 7 L10.5 12 Z" fill="#b9e6f7" stroke="#3d9bc7" stroke-width="0.9"/></svg>
<svg style="position:absolute;left:879px;top:121px;" width="7" height="4" viewBox="0 0 7 4"><path d="M0 0 L7 0 L3.5 4 Z" fill="#555"/></svg>
<svg style="position:absolute;left:895px;top:61px;" width="16" height="16" viewBox="0 0 16 16"><path d="M0.5 6 L4 3 H10 V15 H0.5 Z" fill="#e2f3fa" stroke="#a9cfe0" stroke-width="0.8"/><rect x="0.5" y="6" width="8" height="9" fill="#d6eef8"/><path d="M6 3 L10 0.5 L15.5 9.5 L11 15.5 L8 12 Z" fill="#a6dcf2" stroke="#3d9bc7" stroke-width="0.9"/><path d="M0.5 15 H11" stroke="#3d9bc7" stroke-width="1.2"/></svg>
<svg style="position:absolute;left:947px;top:68px;" width="7" height="4" viewBox="0 0 7 4"><path d="M0 0 L7 0 L3.5 4 Z" fill="#555"/></svg>
<svg style="position:absolute;left:895px;top:88px;" width="16" height="16" viewBox="0 0 16 16"><path d="M0.5 4 L4 0.5 H15.5 V12 L12 15.5 H0.5 Z" fill="#eeeeee" stroke="#b9b9b9" stroke-width="0.8"/><path d="M12 4 L15.5 0.5 V12 L12 15.5 Z" fill="#d8d8d8"/><rect x="2.5" y="5.5" width="8" height="8" fill="#cfecf8" stroke="#6aaed0" stroke-width="0.9"/><rect x="4.5" y="7.5" width="4.5" height="4.5" fill="#3d9bc7"/></svg>
<svg style="position:absolute;left:895px;top:114px;" width="16" height="16" viewBox="0 0 16 16"><path d="M0.5 5 L4 1.5 H15.5 V12 L12 15.5 H0.5 Z" fill="none" stroke="#9a9a9a" stroke-width="0.8" stroke-dasharray="1 1"/><path d="M3 8 L6 5 H15 V12 L12 15 H3 Z" fill="#bfe8f8" stroke="#2b87b6" stroke-width="0.9"/><path d="M3 8 H12 V15 M12 8 L15 5" fill="none" stroke="#2b87b6" stroke-width="0.8"/><path d="M3 1 V8" stroke="#777" stroke-width="0.8"/></svg>
<svg style="position:absolute;left:939px;top:121px;" width="7" height="4" viewBox="0 0 7 4"><path d="M0 0 L7 0 L3.5 4 Z" fill="#555"/></svg>
<svg style="position:absolute;left:973px;top:61px;" width="32" height="32" viewBox="0 0 32 32"><path d="M1 6 L6 1 H31 V26 L26 31 H1 Z" fill="#e0e0e0" stroke="#bdbdbd"/><rect x="1" y="6" width="25" height="25" fill="#f4f4f4" stroke="#c4c4c4"/><path d="M26 6 L31 1" stroke="#c4c4c4"/><rect x="5.5" y="9.5" width="4" height="4" fill="#e2e2e2"/><rect x="6" y="10" width="3" height="3" fill="#b0b0b0"/><rect x="11.5" y="9.5" width="4" height="4" fill="#e2e2e2"/><rect x="12" y="10" width="3" height="3" fill="#b0b0b0"/><rect x="17.5" y="9.5" width="4" height="4" fill="#e2e2e2"/><rect x="18" y="10" width="3" height="3" fill="#b0b0b0"/><rect x="5.5" y="16.5" width="4" height="4" fill="#e2e2e2"/><rect x="6" y="17" width="3" height="3" fill="#b0b0b0"/><rect x="11.5" y="16.5" width="4" height="4" fill="#e2e2e2"/><rect x="12" y="17" width="3" height="3" fill="#b0b0b0"/><rect x="17.5" y="16.5" width="4" height="4" fill="#e2e2e2"/><rect x="18" y="17" width="3" height="3" fill="#b0b0b0"/><rect x="5.5" y="23.5" width="4" height="4" fill="#e2e2e2"/><rect x="6" y="24" width="3" height="3" fill="#b0b0b0"/><rect x="11.5" y="23.5" width="4" height="4" fill="#e2e2e2"/><rect x="12" y="24" width="3" height="3" fill="#b0b0b0"/><rect x="17.5" y="23.5" width="4" height="4" fill="#e2e2e2"/><rect x="18" y="24" width="3" height="3" fill="#b0b0b0"/></svg>
<svg style="position:absolute;left:985px;top:122px;" width="7" height="4" viewBox="0 0 7 4"><path d="M0 0 L7 0 L3.5 4 Z" fill="#555"/></svg>
<svg style="position:absolute;left:1016px;top:61px;" width="16" height="16" viewBox="0 0 16 16"><path d="M1.5 15.5 V1 Q6.5 2 6.5 8 V15.5 Z M14.5 15.5 V1 Q9.5 2 9.5 8 V15.5 Z" fill="#fdfcff" stroke="#7b4bb0" stroke-width="0.9"/><path d="M1.5 1 V15.5 M14.5 1 V15.5" stroke="#7b4bb0" stroke-width="1.3"/><path d="M8 0 V16" stroke="#999" stroke-width="0.8"/></svg>
<svg style="position:absolute;left:1016px;top:88px;" width="16" height="16" viewBox="0 0 16 16"><path d="M5.5 1 H15 V10.5 Z" fill="#dccdf0" stroke="#7b4bb0" stroke-width="1"/><path d="M5.5 1 V9 H15" fill="none" stroke="#7b4bb0" stroke-width="1"/><circle cx="4.5" cy="11.5" r="4" fill="none" stroke="#777" stroke-width="1"/></svg>
<svg style="position:absolute;left:1016px;top:114px;" width="16" height="16" viewBox="0 0 16 16"><rect x="5.5" y="1" width="9" height="9" fill="#f2f2f2" stroke="#bbb"/><circle cx="5" cy="11" r="4.5" fill="#f7f7f7" stroke="#bdbdbd"/></svg>
<svg style="position:absolute;left:1078px;top:61px;" width="16" height="16" viewBox="0 0 16 16"><rect x="0.5" y="1.5" width="15" height="13" fill="#f2f2f2" stroke="#c5c5c5"/><path d="M4 8 H11 M9 6 L11 8 L9 10" fill="none" stroke="#b0b0b0" stroke-width="1"/><path d="M12.5 2 V14" stroke="#bbb"/></svg>
<svg style="position:absolute;left:1078px;top:88px;" width="16" height="16" viewBox="0 0 16 16"><rect x="0.5" y="4.5" width="11" height="11" fill="#f2f2f2" stroke="#cdcdcd"/><path d="M4 4 L8 1 H15.5 V11 L12 15" fill="none" stroke="#cfcfcf" stroke-dasharray="1.5 1"/></svg>
<svg style="position:absolute;left:1078px;top:114px;" width="16" height="16" viewBox="0 0 16 16"><rect x="5.5" y="1" width="9" height="9" fill="#fff" stroke="#333" stroke-width="0.9"/><circle cx="5" cy="11" r="4.5" fill="none" stroke="#888" stroke-width="0.9"/><path d="M5.5 6.5 A4.5 4.5 0 0 1 9.5 10" fill="none" stroke="#333" stroke-width="1.2"/></svg>
<svg style="position:absolute;left:1151px;top:61px;" width="16" height="16" viewBox="0 0 16 16"><path d="M2 5 Q6 0 9 4 T15 3" fill="none" stroke="#7b4bb0" stroke-width="1.1"/><path d="M2 11 Q6 6 9 10 T15 9" fill="none" stroke="#7b4bb0" stroke-width="1.3"/><path d="M0.5 14.5 L3 12 H15.5 L13 14.5 Z" fill="#e9e2f5" stroke="#7b4bb0" stroke-width="0.8"/><path d="M5 5 V9" stroke="#555" stroke-width="0.8" stroke-dasharray="1 1"/></svg>
<svg style="position:absolute;left:1151px;top:88px;" width="16" height="16" viewBox="0 0 16 16"><path d="M0.5 1 V15.5 H15.5 V11.5 H4.5 V1 Z" fill="#f2f2f2" stroke="#c9c9c9"/><path d="M4.5 1 L6 0 V10 H15.5" fill="none" stroke="#cfcfcf"/></svg>
<svg style="position:absolute;left:1151px;top:114px;" width="16" height="16" viewBox="0 0 16 16"><path d="M1.5 4 L5 9 Q8 2 12 4 L15 1 V15 H1.5 Z" fill="#e9dcf8" stroke="#7b4bb0" stroke-width="1.1"/><path d="M1.5 4 L5 9 Q8 2 12 4 L15 1" fill="none" stroke="#7b4bb0" stroke-width="1.8"/></svg>
<svg style="position:absolute;left:1221px;top:61px;" width="16" height="16" viewBox="0 0 16 16"><path d="M0.5 0.5 H15.5 V15.5 H0.5 Z" fill="#f0f0f0" stroke="#cfcfcf"/><path d="M3 0.5 H15.5 V12 Z" fill="#cbb6ea" stroke="#7b4bb0" stroke-width="1"/></svg>
<svg style="position:absolute;left:1221px;top:88px;" width="16" height="16" viewBox="0 0 16 16"><path d="M1 3 Q3 1 6 2 V15 Q3 14 1 15 Z" fill="#d6f0fb" stroke="#2a8fc2" stroke-width="0.9"/><path d="M9 2 Q12 1 15 3 V15 Q12 14 9 15 Z" fill="#cdeefb" stroke="#2a8fc2" stroke-width="0.9"/><path d="M6 2 L9 2 V15 L6 15 Z" fill="url(#ghatch)" stroke="#1c6a96" stroke-width="0.8"/></svg>
<svg style="position:absolute;left:1270px;top:95px;" width="7" height="4" viewBox="0 0 7 4"><path d="M0 0 L7 0 L3.5 4 Z" fill="#555"/></svg>
<svg style="position:absolute;left:1221px;top:114px;" width="16" height="16" viewBox="0 0 16 16"><path d="M1 4 Q5 0 8 3 V14 Q4 12 1 14 Z" fill="#ecf8fd" stroke="#2a8fc2" stroke-width="1"/><path d="M8 3 Q12 1 15.5 4 V15.5 Q12 13 8 14 Z" fill="#d6f0fb" stroke="#2a8fc2" stroke-width="1"/></svg>
<svg style="position:absolute;left:1339px;top:61px;" width="32" height="32" viewBox="0 0 32 32"><path d="M1 12 Q8 2 17 1 L30 6 Q24 16 22 30 Q12 22 1 22 Z" fill="url(#gbb)" stroke="#8a8a8a" stroke-width="0.9"/><path d="M17 1 Q11 11 10 25 M1 16 Q12 12 27 15" fill="none" stroke="#2a8fc2" stroke-width="1.3"/><path d="M30 6 Q24 16 22 30" fill="none" stroke="#2a8fc2" stroke-width="1.3"/></svg>
<svg style="position:absolute;left:1391px;top:62px;" width="14" height="14" viewBox="0 0 14 14"><rect x="0.5" y="0.5" width="13" height="13" fill="url(#gfill)" stroke="#1f7fb3" stroke-width="1.2"/></svg>
<svg style="position:absolute;left:1390px;top:88px;" width="17" height="16" viewBox="0 0 17 16"><path d="M1 15 V4 Q1 0 8 1 Q15 0 16 4 V15 Q8 11 1 15 Z" fill="url(#gsty)" stroke="#777" stroke-width="0.9"/></svg>
<svg style="position:absolute;left:1390px;top:114px;" width="16" height="16" viewBox="0 0 16 16"><path d="M0.5 4.5 L4 1 H15.5 V12 L12 15.5 H0.5 Z M0.5 4.5 H12 V15.5 M12 4.5 L15.5 1" fill="none" stroke="#666" stroke-width="0.8"/><circle cx="8" cy="8.5" r="5.2" fill="url(#gsph3)"/></svg>
<svg style="position:absolute;left:1491px;top:61px;" width="32" height="32" viewBox="0 0 32 32"><rect x="1" y="1" width="30" height="30" fill="#fae7c4" stroke="#c59a4e" stroke-width="1.2"/><path d="M8 1 H31 V23 H21 Q23 18 19 18 Q15 18 17 23 H8 V15 Q13 16 13 11 Q13 6 8 8 Z" fill="#c5ecfa" stroke="#2a8fc2" stroke-width="1.2"/></svg>
<svg style="position:absolute;left:101px;top:147px;" width="8" height="4" viewBox="0 0 8 4"><path d="M0 0 L8 0 L4.0 4 Z" fill="#555"/></svg>
<svg style="position:absolute;left:242px;top:147px;" width="8" height="4" viewBox="0 0 8 4"><path d="M0 0 L8 0 L4.0 4 Z" fill="#555"/></svg>
<svg style="position:absolute;left:374px;top:147px;" width="8" height="4" viewBox="0 0 8 4"><path d="M0 0 L8 0 L4.0 4 Z" fill="#555"/></svg>
<svg style="position:absolute;left:557px;top:147px;" width="8" height="4" viewBox="0 0 8 4"><path d="M0 0 L8 0 L4.0 4 Z" fill="#555"/></svg>
<svg style="position:absolute;left:742px;top:147px;" width="8" height="4" viewBox="0 0 8 4"><path d="M0 0 L8 0 L4.0 4 Z" fill="#555"/></svg>
<svg style="position:absolute;left:910px;top:147px;" width="8" height="4" viewBox="0 0 8 4"><path d="M0 0 L8 0 L4.0 4 Z" fill="#555"/></svg>
<svg style="position:absolute;left:1159px;top:147px;" width="8" height="4" viewBox="0 0 8 4"><path d="M0 0 L8 0 L4.0 4 Z" fill="#555"/></svg>
<svg style="position:absolute;left:1412px;top:147px;" width="8" height="4" viewBox="0 0 8 4"><path d="M0 0 L8 0 L4.0 4 Z" fill="#555"/></svg>
<svg style="position:absolute;left:1539px;top:147px;" width="8" height="4" viewBox="0 0 8 4"><path d="M0 0 L8 0 L4.0 4 Z" fill="#555"/></svg>
<div style="position:absolute;left:32px;top:162px;width:240px;height:26px;background:#dde1e1"></div>
<svg style="position:absolute;left:12px;top:167px;" width="12" height="17" viewBox="0 0 12 17"><rect x="0.5" y="0.5" width="3" height="3" fill="none" stroke="#333" stroke-width="1"/><rect x="0.5" y="6.5" width="3" height="3" fill="none" stroke="#333"/><rect x="6.5" y="6.5" width="3" height="3" fill="none" stroke="#333"/><rect x="0.5" y="12.5" width="3" height="3" fill="none" stroke="#333"/><path d="M2 3.5 V6.5 M2 9.5 V12.5 M3.5 8 H6.5" stroke="#333"/></svg>
<svg style="position:absolute;left:39px;top:167px;" width="17" height="17" viewBox="0 0 17 17"><rect x="0.5" y="0.5" width="9" height="7" rx="1" fill="#fdf2d8" stroke="#c99b45"/><rect x="3.5" y="3.5" width="9" height="7" rx="1" fill="#fdf2d8" stroke="#c99b45"/><rect x="6.5" y="7.5" width="9" height="7" rx="1" fill="#fde9bf" stroke="#c99b45"/></svg>
<svg style="position:absolute;left:14px;top:200px;" width="9" height="7" viewBox="0 0 9 7"><path d="M0 0 L9 0 L4.5 7 Z" fill="#777"/></svg>
<svg style="position:absolute;left:29px;top:198px;" width="14" height="15" viewBox="0 0 14 15"><path d="M0.5 4 L3.5 1 H13 L10 4 Z" fill="#7a7a7a"/><path d="M10 4 L13 1 V11 L10 14 Z" fill="#9a9a9a"/><rect x="0.5" y="4.5" width="9.5" height="9.5" fill="#5cb83a"/></svg>
<div style="position:absolute;left:50px;top:197px;width:2px;height:2px;background:#b0b0b0"></div>
<div style="position:absolute;left:50px;top:201px;width:2px;height:2px;background:#b0b0b0"></div>
<div style="position:absolute;left:50px;top:205px;width:2px;height:2px;background:#b0b0b0"></div>
<div style="position:absolute;left:50px;top:209px;width:2px;height:2px;background:#b0b0b0"></div>
<svg style="position:absolute;left:74px;top:197px;" width="16" height="15" viewBox="0 0 16 15"><path d="M0 1 H4 L2 3 Z M2 6 H6 L4 8 Z M4 11 H8 L6 13 Z" fill="#222"/><rect x="5.5" y="0.5" width="6" height="3.5" fill="#9fdcf4" stroke="#1a6f9a"/><rect x="7.5" y="5.5" width="6" height="3.5" fill="#9fdcf4" stroke="#1a6f9a"/><rect x="9.5" y="10.5" width="6" height="3.5" fill="#9fdcf4" stroke="#1a6f9a"/></svg>
<svg style="position:absolute;left:100px;top:196px;" width="10" height="17" viewBox="0 0 10 17"><path d="M0 2 L2 3.5 L0 5 Z M0 8 L2 9.5 L0 11 Z M0 14 L2 15.5 L0 17 Z" fill="#222"/><rect x="4.5" y="0.5" width="4" height="4" fill="#777" stroke="#444"/><rect x="4.5" y="6.5" width="4" height="4" fill="#777" stroke="#444"/><rect x="4.5" y="12.5" width="4" height="4" fill="#777" stroke="#444"/></svg>
<svg style="position:absolute;left:123px;top:197px;" width="16" height="16" viewBox="0 0 16 16"><rect x="0.5" y="0.5" width="4.5" height="13" fill="#9fdcf4" stroke="#1a6f9a"/><path d="M5 0.5 H13.5 V8 M5 3.5 H13.5 M9 0.5 V8" fill="none" stroke="#444"/><ellipse cx="10.5" cy="12.5" rx="4.5" ry="2.8" fill="#444"/><circle cx="10.5" cy="12.5" r="1.2" fill="#fff"/></svg>
<div style="position:absolute;left:146px;top:192px;width:1px;height:23px;background:#c5c9c9"></div>
<svg style="position:absolute;left:154px;top:196px;" width="16" height="17" viewBox="0 0 16 17"><path d="M4 2 H10 L12 6 V15 L8 16 H4 Z" fill="#f6dfa9" stroke="#c9a153" stroke-width="0.8"/><path d="M8 3 V16" stroke="#c9a153" stroke-width="0.6"/><circle cx="4" cy="4" r="2.3" fill="#f6a21a"/><path d="M4 0.5 V7.5 M0.5 4 H7.5" stroke="#f08a00" stroke-width="0.8"/></svg>
<div style="position:absolute;left:179px;top:192px;width:1px;height:23px;background:#c5c9c9"></div>
<svg style="position:absolute;left:188px;top:196px;" width="17" height="16" viewBox="0 0 17 16"><rect x="0.5" y="0.5" width="3" height="3" fill="none" stroke="#333"/><rect x="0.5" y="6.5" width="3" height="3" fill="#6cc5ec" stroke="#1a6f9a"/><rect x="0.5" y="12.5" width="3" height="3" fill="none" stroke="#333"/><path d="M2 3.5 V6.5 M2 9.5 V12.5" stroke="#333"/><path d="M6 8 H16 L12.5 11.5 V16 H9.5 V11.5 Z" fill="#333"/></svg>
<span style="position:absolute;left:229.0px;top:195px;font-size:15px;line-height:15px;color:#222;font-weight:400;transform:scaleX(1.0787);transform-origin:0 0;">»</span>
<svg style="position:absolute;left:248px;top:195px;" width="16" height="18" viewBox="0 0 16 18"><path d="M0.5 0.5 H9 L13.5 5 V16.5 H0.5 Z" fill="#f3f5f7" stroke="#aab4bb"/><circle cx="4" cy="8" r="1.3" fill="none" stroke="#777" stroke-width="0.8"/><circle cx="4" cy="12" r="1.3" fill="none" stroke="#777" stroke-width="0.8"/><path d="M7 8 H11 M7 12 H11" stroke="#777"/><path d="M15.5 15 V17 H13.5 Z" fill="#444"/></svg>
<svg style="position:absolute;left:12px;top:225px;" width="17" height="16" viewBox="0 0 17 16"><path d="M0.5 1 H15.5 L9.5 7.5 V15 H6.5 V7.5 Z" fill="url(#gfun)" stroke="#555" stroke-width="1"/></svg>
<svg width="0" height="0" style="position:absolute"><defs><linearGradient id="gfun" x1="0" y1="0" x2="1" y2="0"><stop offset="0" stop-color="#ffffff"/><stop offset="1" stop-color="#9a9a9a"/></linearGradient></defs></svg>
<div style="position:absolute;left:32px;top:220px;width:192px;height:27px;background:#ffffff;border:1px solid #a7b3b6;box-sizing:border-box"></div>
<svg style="position:absolute;left:209px;top:229px;" width="10" height="10" viewBox="0 0 10 10"><path d="M1 1 L9 9 M9 1 L1 9" stroke="#8a8a8a" stroke-width="1.1"/></svg>
<svg style="position:absolute;left:229px;top:231px;" width="8" height="4" viewBox="0 0 8 4"><path d="M0 0 L8 0 L4.0 4 Z" fill="#444"/></svg>
<svg style="position:absolute;left:249px;top:227px;" width="12" height="12" viewBox="0 0 12 12"><path d="M6 0.5 V11.5 M0.5 6 H11.5" stroke="#888" stroke-width="2.4"/></svg>
<div style="position:absolute;left:8px;top:272px;width:258px;height:1px;background:#d7dcdc"></div>
<div style="position:absolute;left:266px;top:252px;width:1px;height:20px;background:#d7dcdc"></div>
<svg style="position:absolute;left:12px;top:275px;" width="15" height="15" viewBox="0 0 15 15"><path d="M0.5 3.5 L3.5 0.5 L13.5 0.5 L10.5 3.5 Z" fill="#dff5fd" stroke="#2a8fc2" stroke-width="1" stroke-linejoin="round"/><path d="M10.5 3.5 L13.5 0.5 L13.5 10.5 L10.5 13.5 Z" fill="#62b6da" stroke="#2a8fc2" stroke-width="1" stroke-linejoin="round"/><rect x="0.5" y="3.5" width="10" height="10" fill="#bfeaf9" stroke="#2a8fc2" stroke-width="1"/></svg>
<div style="position:absolute;left:19px;top:305px;width:1px;height:266px;background:#c3c3c3"></div>
<div style="position:absolute;left:39px;top:323px;width:1px;height:0px;"></div>
<div style="position:absolute;left:59px;top:327px;width:1px;height:45px;background:#c3c3c3"></div>
<div style="position:absolute;left:59px;top:335px;width:9px;height:1px;background:#c3c3c3"></div>
<div style="position:absolute;left:59px;top:353px;width:9px;height:1px;background:#c3c3c3"></div>
<div style="position:absolute;left:59px;top:372px;width:9px;height:1px;background:#c3c3c3"></div>
<div style="position:absolute;left:20px;top:389px;width:9px;height:1px;background:#c3c3c3"></div>
<div style="position:absolute;left:20px;top:407px;width:9px;height:1px;background:#c3c3c3"></div>
<div style="position:absolute;left:20px;top:425px;width:9px;height:1px;background:#c3c3c3"></div>
<div style="position:absolute;left:20px;top:443px;width:9px;height:1px;background:#c3c3c3"></div>
<div style="position:absolute;left:20px;top:515px;width:9px;height:1px;background:#c3c3c3"></div>
<div style="position:absolute;left:20px;top:533px;width:9px;height:1px;background:#c3c3c3"></div>
<div style="position:absolute;left:20px;top:569px;width:9px;height:1px;background:#c3c3c3"></div>
<div style="position:absolute;left:19px;top:290px;width:1px;height:4px;background:#c3c3c3"></div>
<div style="position:absolute;left:39px;top:309px;width:1px;height:4px;background:#c3c3c3"></div>
<svg style="position:absolute;left:15px;top:299px;" width="8" height="4" viewBox="0 0 8 4"><path d="M0 0 L8 0 L4.0 4 Z" fill="#555"/></svg>
<svg style="position:absolute;left:35px;top:317px;" width="8" height="4" viewBox="0 0 8 4"><path d="M0 0 L8 0 L4.0 4 Z" fill="#555"/></svg>
<svg style="position:absolute;left:32px;top:292px;" width="15" height="17" viewBox="0 0 15 17"><rect x="0.5" y="0.5" width="13" height="15" fill="#fff" stroke="#a8a8a8"/><rect x="1" y="1" width="12" height="1.5" fill="#2a9ad6"/><rect x="2.5" y="4" width="3" height="2.5" fill="#2a9ad6"/><rect x="2.5" y="8" width="3" height="2.5" fill="#2a9ad6"/><rect x="2.5" y="12" width="3" height="2.5" fill="#2a9ad6"/><path d="M7 5 H11 M7 6.5 H10 M7 9 H11 M7 10.5 H10 M7 13 H11" stroke="#999" stroke-width="0.7"/></svg>
<svg style="position:absolute;left:51px;top:310px;" width="17" height="17" viewBox="0 0 17 17"><path d="M0.5 4 L3 1.5 H11 V10 L8.5 12.5 H0.5 Z" fill="#fff" stroke="#2a8fc2"/><path d="M4.5 7.5 L7.5 4.5 L16.5 4.5 L13.5 7.5 Z" fill="#cdeffb" stroke="#2a8fc2" stroke-width="1" stroke-linejoin="round"/><path d="M13.5 7.5 L16.5 4.5 L16.5 13.5 L13.5 16.5 Z" fill="#5db3d9" stroke="#2a8fc2" stroke-width="1" stroke-linejoin="round"/><rect x="4.5" y="7.5" width="9" height="9" fill="#ffffff" stroke="#2a8fc2" stroke-width="1"/></svg>
<svg style="position:absolute;left:72px;top:328px;" width="16" height="16" viewBox="0 0 16 16"><path d="M0.5 4.5 L3.5 1.5 L14.5 1.5 L11.5 4.5 Z" fill="#bfe9f8" stroke="#2a8fc2" stroke-width="1" stroke-linejoin="round"/><path d="M11.5 4.5 L14.5 1.5 L14.5 12.5 L11.5 15.5 Z" fill="#7cc3e0" stroke="#2a8fc2" stroke-width="1" stroke-linejoin="round"/><rect x="0.5" y="4.5" width="11" height="11" fill="#ffffff" stroke="#2a8fc2" stroke-width="1"/></svg>
<svg style="position:absolute;left:72px;top:346px;" width="16" height="16" viewBox="0 0 16 16"><path d="M0.5 4.5 L3.5 1.5 L14.5 1.5 L11.5 4.5 Z" fill="#bfe9f8" stroke="#2a8fc2" stroke-width="1" stroke-linejoin="round"/><path d="M11.5 4.5 L14.5 1.5 L14.5 12.5 L11.5 15.5 Z" fill="#7cc3e0" stroke="#2a8fc2" stroke-width="1" stroke-linejoin="round"/><rect x="0.5" y="4.5" width="11" height="11" fill="#ffffff" stroke="#2a8fc2" stroke-width="1"/></svg>
<svg style="position:absolute;left:72px;top:364px;" width="16" height="16" viewBox="0 0 16 16"><path d="M0.5 4.5 L3.5 1.5 L14.5 1.5 L11.5 4.5 Z" fill="#bfe9f8" stroke="#2a8fc2" stroke-width="1" stroke-linejoin="round"/><path d="M11.5 4.5 L14.5 1.5 L14.5 12.5 L11.5 15.5 Z" fill="#7cc3e0" stroke="#2a8fc2" stroke-width="1" stroke-linejoin="round"/><rect x="0.5" y="4.5" width="11" height="11" fill="#ffffff" stroke="#2a8fc2" stroke-width="1"/></svg>
<svg style="position:absolute;left:70px;top:362px;" width="11" height="11" viewBox="0 0 11 11"><path d="M5 0.5 L6.5 3.8 L10 4.1 L7.4 6.4 L8.1 10 L5 8.2 L1.9 10 L2.6 6.4 L0 4.1 L3.5 3.8 Z" fill="#1d8fd0"/></svg>
<svg style="position:absolute;left:31px;top:386px;" width="15" height="9" viewBox="0 0 15 9"><path d="M4.5 0.5 H13.5 L9.5 7.5 H0.5 Z" fill="none" stroke="#8a6a2a" stroke-width="1.2"/></svg>
<svg style="position:absolute;left:31px;top:404px;" width="15" height="9" viewBox="0 0 15 9"><path d="M4.5 0.5 H13.5 L9.5 7.5 H0.5 Z" fill="none" stroke="#8a6a2a" stroke-width="1.2"/></svg>
<svg style="position:absolute;left:31px;top:422px;" width="15" height="9" viewBox="0 0 15 9"><path d="M4.5 0.5 H13.5 L9.5 7.5 H0.5 Z" fill="none" stroke="#8a6a2a" stroke-width="1.2"/></svg>
<svg style="position:absolute;left:31px;top:435px;" width="16" height="17" viewBox="0 0 16 17"><path d="M5 1 V11 H15.5 M5 11 L1 15.5" fill="none" stroke="#8a6a2a" stroke-width="1.1"/><path d="M3.3 3 L5 0 L6.7 3 M13 9.3 L16 11 L13 12.7 M0.5 12.5 L0.5 16 L3.7 15.7" fill="none" stroke="#8a6a2a" stroke-width="1"/></svg>
<svg style="position:absolute;left:31px;top:453px;" width="16" height="16" viewBox="0 0 16 16"><path d="M0.5 6 L5 1.5 H15.5 L11 6 Z" fill="#cdeffb" stroke="#6ab6d9" stroke-width="0.8"/><path d="M11 6 L15.5 1.5 V11 L11 15.5 Z" fill="#6fc0e0" stroke="#3d9bc7" stroke-width="0.8"/><rect x="0.5" y="6" width="10.5" height="9.5" fill="#f3f3f3" stroke="#c8c8c8" stroke-width="0.8"/></svg>
<svg style="position:absolute;left:31px;top:471px;" width="16" height="16" viewBox="0 0 16 16"><path d="M0.5 6 L5 1.5 H15.5 L11 6 Z" fill="#cdeffb" stroke="#6ab6d9" stroke-width="0.8"/><path d="M11 6 L15.5 1.5 V11 L11 15.5 Z" fill="#6fc0e0" stroke="#3d9bc7" stroke-width="0.8"/><rect x="0.5" y="6" width="10.5" height="9.5" fill="#f3f3f3" stroke="#c8c8c8" stroke-width="0.8"/></svg>
<svg style="position:absolute;left:31px;top:489px;" width="16" height="16" viewBox="0 0 16 16"><path d="M0.5 6 L5 1.5 H15.5 L11 6 Z" fill="#cdeffb" stroke="#6ab6d9" stroke-width="0.8"/><path d="M11 6 L15.5 1.5 V11 L11 15.5 Z" fill="#6fc0e0" stroke="#3d9bc7" stroke-width="0.8"/><rect x="0.5" y="6" width="10.5" height="9.5" fill="#f3f3f3" stroke="#c8c8c8" stroke-width="0.8"/></svg>
<svg style="position:absolute;left:31px;top:543px;" width="16" height="16" viewBox="0 0 16 16"><path d="M0.5 6 L5 1.5 H15.5 L11 6 Z" fill="#cdeffb" stroke="#6ab6d9" stroke-width="0.8"/><path d="M11 6 L15.5 1.5 V11 L11 15.5 Z" fill="#6fc0e0" stroke="#3d9bc7" stroke-width="0.8"/><rect x="0.5" y="6" width="10.5" height="9.5" fill="#f3f3f3" stroke="#c8c8c8" stroke-width="0.8"/></svg>
<svg style="position:absolute;left:16px;top:458px;" width="5" height="8" viewBox="0 0 5 8"><path d="M0 0 L4.5 4 L0 8 Z" fill="#555"/></svg>
<svg style="position:absolute;left:16px;top:476px;" width="5" height="8" viewBox="0 0 5 8"><path d="M0 0 L4.5 4 L0 8 Z" fill="#555"/></svg>
<svg style="position:absolute;left:16px;top:494px;" width="5" height="8" viewBox="0 0 5 8"><path d="M0 0 L4.5 4 L0 8 Z" fill="#555"/></svg>
<svg style="position:absolute;left:16px;top:548px;" width="5" height="8" viewBox="0 0 5 8"><path d="M0 0 L4.5 4 L0 8 Z" fill="#555"/></svg>
<svg style="position:absolute;left:31px;top:507px;" width="16" height="16" viewBox="0 0 16 16"><path d="M1.5 15.5 V1 Q6.5 2 6.5 8 V15.5 Z M14.5 15.5 V1 Q9.5 2 9.5 8 V15.5 Z" fill="#fdfcff" stroke="#7b4bb0" stroke-width="0.9"/><path d="M1.5 1 V15.5 M14.5 1 V15.5" stroke="#7b4bb0" stroke-width="1.3"/><path d="M8 0 V16" stroke="#999" stroke-width="0.8"/></svg>
<svg style="position:absolute;left:30px;top:525px;" width="17" height="17" viewBox="0 0 17 17"><path d="M6 4 L9 1 H15.5 V8 L12.5 11 H6 Z" fill="#c9effc" stroke="#2a8fc2"/><circle cx="5.5" cy="11" r="5" fill="url(#gsph2)" stroke="#2a8fc2" stroke-width="0.8"/></svg>
<svg style="position:absolute;left:30px;top:561px;" width="17" height="17" viewBox="0 0 17 17"><path d="M6 4 L9 1 H15.5 V8 L12.5 11 H6 Z" fill="#e6f7fd" stroke="#2a8fc2"/><circle cx="5.5" cy="11.5" r="5" fill="url(#gsphw)"/></svg>
<div style="position:absolute;left:11px;top:585px;width:255px;height:2px;background:#5cc24a"></div>
<svg style="position:absolute;left:10px;top:582px;" width="5" height="8" viewBox="0 0 5 8"><path d="M0 0 L4 4 L0 8 Z" fill="#5cc24a"/></svg>
<div style="position:absolute;left:8px;top:613px;width:258px;height:3px;background:#dde1e1"></div>
<svg style="position:absolute;left:14px;top:628px;" width="9" height="7" viewBox="0 0 9 7"><path d="M0 0 L9 0 L4.5 7 Z" fill="#777"/></svg>
<svg style="position:absolute;left:29px;top:625px;" width="17" height="16" viewBox="0 0 17 16"><path d="M3 1 H16 L13 5 H0 Z" fill="#5cb83a"/><path d="M3 5.5 H16 L13 9.5 H0 Z" fill="#777"/><path d="M3 10 H16 L13 14 H0 Z" fill="#8a8a8a"/></svg>
<div style="position:absolute;left:53px;top:625px;width:2px;height:2px;background:#b0b0b0"></div>
<div style="position:absolute;left:53px;top:629px;width:2px;height:2px;background:#b0b0b0"></div>
<div style="position:absolute;left:53px;top:633px;width:2px;height:2px;background:#b0b0b0"></div>
<div style="position:absolute;left:53px;top:637px;width:2px;height:2px;background:#b0b0b0"></div>
<svg style="position:absolute;left:77px;top:625px;" width="16" height="15" viewBox="0 0 16 15"><path d="M0 1 H4 L2 3 Z M2 6 H6 L4 8 Z M4 11 H8 L6 13 Z" fill="#222"/><rect x="5.5" y="0.5" width="6" height="3.5" fill="#9fdcf4" stroke="#1a6f9a"/><rect x="7.5" y="5.5" width="6" height="3.5" fill="#9fdcf4" stroke="#1a6f9a"/><rect x="9.5" y="10.5" width="6" height="3.5" fill="#9fdcf4" stroke="#1a6f9a"/></svg>
<svg style="position:absolute;left:104px;top:624px;" width="10" height="17" viewBox="0 0 10 17"><path d="M0 2 L2 3.5 L0 5 Z M0 8 L2 9.5 L0 11 Z M0 14 L2 15.5 L0 17 Z" fill="#222"/><rect x="4.5" y="0.5" width="4" height="4" fill="#777" stroke="#444"/><rect x="4.5" y="6.5" width="4" height="4" fill="#777" stroke="#444"/><rect x="4.5" y="12.5" width="4" height="4" fill="#777" stroke="#444"/></svg>
<div style="position:absolute;left:8px;top:648px;width:259px;height:24px;background:#f3f5f5;border:1px solid #c9cfcf;box-sizing:border-box"></div>
<div style="position:absolute;left:9px;top:649px;width:22px;height:22px;background:#e9ecec"></div>
<div style="position:absolute;left:31px;top:649px;width:1px;height:22px;background:#d2d7d7"></div>
<div style="position:absolute;left:250px;top:649px;width:1px;height:22px;background:#d2d7d7"></div>
<svg style="position:absolute;left:14px;top:652px;" width="12" height="16" viewBox="0 0 12 16"><path d="M1 1 V13 L4 10 L6.5 15 L8.5 14 L6 9 H10 Z" fill="#fff" stroke="#777" stroke-width="0.9"/></svg>
<span style="position:absolute;left:40.0px;top:654px;font-size:11.5px;line-height:11.5px;color:#a0a0a0;font-weight:400;transform:scaleX(0.8576);transform-origin:0 0;">LEVEL.PRT</span>
<svg style="position:absolute;left:11px;top:674px;" width="17" height="16" viewBox="0 0 17 16"><path d="M3 1 H16 L13 5 H0 Z" fill="#bfe8f8" stroke="#2a8fc2" stroke-width="0.9"/><path d="M3 6 H16 L13 10 H0 Z" fill="#fff" stroke="#444" stroke-width="0.9"/><path d="M3 11 H16 L13 15 H0 Z" fill="#fff" stroke="#444" stroke-width="0.9"/></svg>
<div style="position:absolute;left:19px;top:692px;width:1px;height:150px;background:#c3c3c3"></div>
<svg style="position:absolute;left:17px;top:697px;" width="5" height="8" viewBox="0 0 5 8"><path d="M0 0 L4.5 4 L0 8 Z" fill="#444"/></svg>
<svg style="position:absolute;left:31px;top:693px;" width="17" height="17" viewBox="0 0 17 17"><rect x="0.5" y="0.5" width="11" height="11" fill="#fbf3df" stroke="#777" stroke-width="0.9"/><path d="M2 3 L3.5 4.5 L6 1.5 M2 7 L3.5 8.5 L6 5.5" fill="none" stroke="#1a7fc0" stroke-width="1"/><path d="M7 3.5 H10 M7 7.5 H10" stroke="#999" stroke-width="0.8"/><path d="M4.5 11.5 H16 L12.5 15.5 H1 Z" fill="#fff" stroke="#777" stroke-width="0.9"/></svg>
<svg style="position:absolute;left:17px;top:717px;" width="5" height="8" viewBox="0 0 5 8"><path d="M0 0 L4.5 4 L0 8 Z" fill="#444"/></svg>
<svg style="position:absolute;left:31px;top:718px;" width="17" height="7" viewBox="0 0 17 7"><path d="M4.5 0.5 H16 L12 6.5 H0.5 Z" fill="#fff" stroke="#777" stroke-width="0.9"/></svg>
<div style="position:absolute;left:20px;top:741px;width:10px;height:1px;background:#c3c3c3"></div>
<svg style="position:absolute;left:31px;top:733px;" width="17" height="17" viewBox="0 0 17 17"><rect x="0.5" y="0.5" width="11" height="11" fill="#fbf3df" stroke="#777" stroke-width="0.9"/><path d="M2 3 L3.5 4.5 L6 1.5 M2 7 L3.5 8.5 L6 5.5" fill="none" stroke="#1a7fc0" stroke-width="1"/><path d="M7 3.5 H10 M7 7.5 H10" stroke="#999" stroke-width="0.8"/><path d="M4.5 11.5 H16 L12.5 15.5 H1 Z" fill="#fff" stroke="#777" stroke-width="0.9"/></svg>
<div style="position:absolute;left:20px;top:761px;width:10px;height:1px;background:#c3c3c3"></div>
<svg style="position:absolute;left:31px;top:753px;" width="17" height="17" viewBox="0 0 17 17"><rect x="0.5" y="0.5" width="11" height="11" fill="#fbf3df" stroke="#777" stroke-width="0.9"/><path d="M2 3 L3.5 4.5 L6 1.5 M2 7 L3.5 8.5 L6 5.5" fill="none" stroke="#1a7fc0" stroke-width="1"/><path d="M7 3.5 H10 M7 7.5 H10" stroke="#999" stroke-width="0.8"/><path d="M4.5 11.5 H16 L12.5 15.5 H1 Z" fill="#fff" stroke="#777" stroke-width="0.9"/></svg>
<div style="position:absolute;left:20px;top:781px;width:10px;height:1px;background:#c3c3c3"></div>
<svg style="position:absolute;left:31px;top:773px;" width="17" height="17" viewBox="0 0 17 17"><rect x="0.5" y="0.5" width="11" height="11" fill="#fbf3df" stroke="#777" stroke-width="0.9"/><path d="M2 3 L3.5 4.5 L6 1.5 M2 7 L3.5 8.5 L6 5.5" fill="none" stroke="#1a7fc0" stroke-width="1"/><path d="M7 3.5 H10 M7 7.5 H10" stroke="#999" stroke-width="0.8"/><path d="M4.5 11.5 H16 L12.5 15.5 H1 Z" fill="#fff" stroke="#777" stroke-width="0.9"/></svg>
<svg style="position:absolute;left:17px;top:797px;" width="5" height="8" viewBox="0 0 5 8"><path d="M0 0 L4.5 4 L0 8 Z" fill="#444"/></svg>
<svg style="position:absolute;left:31px;top:793px;" width="17" height="17" viewBox="0 0 17 17"><rect x="0.5" y="0.5" width="11" height="11" fill="#fbf3df" stroke="#777" stroke-width="0.9"/><path d="M2 3 L3.5 4.5 L6 1.5 M2 7 L3.5 8.5 L6 5.5" fill="none" stroke="#1a7fc0" stroke-width="1"/><path d="M7 3.5 H10 M7 7.5 H10" stroke="#999" stroke-width="0.8"/><path d="M4.5 11.5 H16 L12.5 15.5 H1 Z" fill="#fff" stroke="#777" stroke-width="0.9"/></svg>
<svg style="position:absolute;left:17px;top:817px;" width="5" height="8" viewBox="0 0 5 8"><path d="M0 0 L4.5 4 L0 8 Z" fill="#444"/></svg>
<svg style="position:absolute;left:31px;top:818px;" width="17" height="7" viewBox="0 0 17 7"><path d="M4.5 0.5 H16 L12 6.5 H0.5 Z" fill="#fff" stroke="#777" stroke-width="0.9"/></svg>
<div style="position:absolute;left:20px;top:841px;width:10px;height:1px;background:#c3c3c3"></div>
<svg style="position:absolute;left:31px;top:833px;" width="17" height="17" viewBox="0 0 17 17"><rect x="0.5" y="0.5" width="11" height="11" fill="#fbf3df" stroke="#777" stroke-width="0.9"/><path d="M2 3 L3.5 4.5 L6 1.5 M2 7 L3.5 8.5 L6 5.5" fill="none" stroke="#1a7fc0" stroke-width="1"/><path d="M7 3.5 H10 M7 7.5 H10" stroke="#999" stroke-width="0.8"/><path d="M4.5 11.5 H16 L12.5 15.5 H1 Z" fill="#fff" stroke="#777" stroke-width="0.9"/></svg>
<svg style="position:absolute;left:0;top:0" width="1920" height="1080" viewBox="0 0 1920 1080"><polygon points="716.7,433.3 685.6,448.6 1475.3,662.5 1506.1,647.2" fill="#939fac"/><polygon points="685.6,448.6 1475.3,662.5 1475.6,671.4 685.6,457.2" fill="#9ba7b5"/><polygon points="698.3,460.0 700.0,545.5 1490.3,758.9 1487.8,666.0" fill="#97a3b1"/><polygon points="698.3,461.0 702.2,462.0 704.4,545.8 700.0,545.0" fill="#a9b4c1"/><polygon points="1484.4,668.0 1487.8,666.1 1490.3,758.9 1486.4,758.0" fill="#a9b4c1"/><polygon points="1487.8,666.1 1494.7,662.8 1496.4,755.3 1490.3,758.9" fill="#6e7884"/><polygon points="700.0,545.0 688.3,551.1 1477.2,764.4 1490.3,758.9 1486.4,758.0" fill="#939fac"/><polygon points="1496.4,747.0 1508.3,750.3 1496.4,755.3" fill="#a9b4c1"/><polygon points="688.3,551.1 1477.2,764.4 1477.5,774.4 688.3,560.3" fill="#9ba7b5"/><polygon points="1477.2,764.4 1490.3,758.9 1496.4,755.3 1508.3,750.3 1509.4,758.9 1477.5,774.4" fill="#6e7884"/><polygon points="1475.3,662.5 1506.1,647.2 1506.7,656.7 1494.7,662.8 1487.8,666.1 1475.6,671.4" fill="#6e7884"/><polygon points="685.6,448.6 689.2,449.4 689.2,458.3 685.6,457.2" fill="#a9b4c1"/><polygon points="688.3,551.1 692.2,551.9 692.2,561.4 688.3,560.3" fill="#a9b4c1"/><polygon points="1471.4,661.4 1475.3,662.5 1475.6,671.4 1471.6,670.3" fill="#a9b4c1"/><polygon points="1473.3,763.9 1477.2,764.4 1477.5,774.4 1473.3,773.3" fill="#a9b4c1"/><polygon points="1078.1,586.9 1109.8,595.0 1110.7,623.5 1079.0,615.2" fill="#a9b4c1" stroke="#15181c" stroke-width="0.9"/><polygon points="1078.1,586.9 1084.8,589.7 1085.5,612.0 1079.0,615.2" fill="#6e7884"/><polygon points="1084.8,589.7 1109.8,595.7 1109.8,618.0 1085.5,612.0" fill="#e9eaed" stroke="#15181c" stroke-width="0.6"/><polyline points="1079.0,615.2 1085.5,612.0" fill="none" stroke="#15181c" stroke-width="0.8"/><polygon points="1383.1,665.2 1414.7,673.0 1415.3,710.7 1384.0,702.5" fill="#a9b4c1" stroke="#15181c" stroke-width="0.9"/><polygon points="1383.1,665.2 1389.7,667.3 1390.3,699.5 1384.0,702.5" fill="#6e7884"/><polygon points="1389.7,667.3 1414.4,673.7 1414.7,705.5 1390.3,699.5" fill="#e9eaed" stroke="#15181c" stroke-width="0.6"/><polyline points="1384.0,702.5 1390.3,699.5" fill="none" stroke="#15181c" stroke-width="0.8"/><polyline points="716.7,433.3 1506.1,647.2" fill="none" stroke="#15181c" stroke-width="0.9" stroke-linejoin="round"/><polyline points="685.6,448.6 1475.3,662.5" fill="none" stroke="#15181c" stroke-width="0.9" stroke-linejoin="round"/><polyline points="685.6,457.2 1475.6,671.4" fill="none" stroke="#15181c" stroke-width="0.9" stroke-linejoin="round"/><polyline points="716.7,433.3 685.6,448.6 685.6,457.2" fill="none" stroke="#15181c" stroke-width="0.9" stroke-linejoin="round"/><polyline points="720.0,434.2 689.2,449.4 689.2,458.3" fill="none" stroke="#15181c" stroke-width="0.9" stroke-linejoin="round"/><polyline points="698.3,461.0 700.0,545.0" fill="none" stroke="#15181c" stroke-width="0.9" stroke-linejoin="round"/><polyline points="702.2,462.0 704.4,545.8" fill="none" stroke="#15181c" stroke-width="0.9" stroke-linejoin="round"/><polyline points="704.4,545.8 1486.4,758.0" fill="none" stroke="#15181c" stroke-width="0.9" stroke-linejoin="round"/><polyline points="688.3,551.1 1477.2,764.4" fill="none" stroke="#15181c" stroke-width="0.9" stroke-linejoin="round"/><polyline points="688.3,560.3 1477.5,774.4" fill="none" stroke="#15181c" stroke-width="0.9" stroke-linejoin="round"/><polyline points="700.0,545.0 688.3,551.1 688.3,560.3" fill="none" stroke="#15181c" stroke-width="0.9" stroke-linejoin="round"/><polyline points="704.4,545.8 692.2,551.9 692.2,561.4" fill="none" stroke="#15181c" stroke-width="0.9" stroke-linejoin="round"/><polyline points="1471.4,661.4 1502.3,646.2" fill="none" stroke="#15181c" stroke-width="0.9" stroke-linejoin="round"/><polyline points="1475.3,662.5 1506.1,647.2 1506.7,656.7 1494.7,662.8 1496.4,755.3 1508.3,750.3 1509.4,758.9 1477.5,774.4 1477.2,764.4 1490.3,758.9 1487.8,666.1 1475.6,671.4 1475.3,662.5" fill="none" stroke="#15181c" stroke-width="0.9" stroke-linejoin="round"/><polyline points="1471.4,661.4 1471.6,670.3" fill="none" stroke="#15181c" stroke-width="0.9" stroke-linejoin="round"/><polyline points="1484.4,668.0 1486.4,758.0" fill="none" stroke="#15181c" stroke-width="0.9" stroke-linejoin="round"/><polyline points="1473.3,763.9 1473.3,773.3" fill="none" stroke="#15181c" stroke-width="0.9" stroke-linejoin="round"/><polyline points="1496.4,747.0 1508.3,750.3" fill="none" stroke="#15181c" stroke-width="0.9" stroke-linejoin="round"/><polyline points="1494.5,746.5 1496.4,747.0" fill="none" stroke="#15181c" stroke-width="0.9" stroke-linejoin="round"/><polygon points="772.0,485.0 820.4,497.3 821.1,553.6 772.5,541.0" fill="#b98672" stroke="#1fd41f" stroke-width="1.3"/><polygon points="764.0,488.7 812.9,501.3 813.3,557.6 764.8,545.0" fill="#b98672" stroke="#1fd41f" stroke-width="1.3"/><polygon points="773.9,499.5 812.5,509.5 812.8,549.5 774.3,539.0" fill="#b98571" stroke="#1fd41f" stroke-width="1.1"/><polygon points="774.5,500.0 782.2,504.0 782.6,532.8 775.0,538.5" fill="#a0644f"/><polygon points="774.5,493.5 779.0,494.7 779.0,501.5 774.5,500.0" fill="#c2653c"/><polygon points="805.0,542.0 812.5,544.0 812.5,550.0 805.0,548.0" fill="#c2653c"/><polygon points="779.0,502.0 806.0,509.0 806.0,542.0 779.5,535.0" fill="none" stroke="#1fd41f" stroke-width="1.0"/><polygon points="782.2,504.0 803.0,509.5 803.0,537.9 782.6,532.8" fill="#e9eaed" stroke="#1fd41f" stroke-width="1.2"/><polyline points="772.0,485.0 772.5,541.0" fill="none" stroke="#1fd41f" stroke-width="1.0"/></svg>
<div style="position:absolute;left:117px;top:271px;width:249px;height:80px;background:rgba(60,64,68,0.25);filter:blur(1.5px)"></div>
<div style="position:absolute;left:117px;top:271px;width:247px;height:78px;background:#7b7e81;filter:blur(0.6px)"></div>
<div style="position:absolute;left:112px;top:266px;width:251px;height:82px;background:#fafafa;border:1px solid #a7a7a7;box-sizing:border-box"></div>
<div style="position:absolute;left:113px;top:292px;width:249px;height:1px;background:#e2e2e2"></div>
<div style="position:absolute;left:113px;top:319px;width:249px;height:1px;background:#e2e2e2"></div>
<div style="position:absolute;left:118px;top:376px;width:248px;height:288px;background:rgba(60,64,68,0.25);filter:blur(1.5px)"></div>
<div style="position:absolute;left:118px;top:376px;width:246px;height:286px;background:#7b7e81;filter:blur(0.6px)"></div>
<div style="position:absolute;left:112px;top:370px;width:251px;height:291px;background:#ffffff;border:1px solid #a7a7a7;box-sizing:border-box"></div>
<div style="position:absolute;left:113px;top:371px;width:27px;height:289px;background:#f9f9f9"></div>
<div style="position:absolute;left:140px;top:371px;width:1px;height:289px;background:#e3e3e3"></div>
<div style="position:absolute;left:113px;top:489px;width:249px;height:22px;background:#d2eefb"></div>
<div style="position:absolute;left:143px;top:484px;width:217px;height:1px;background:#e3e3e3"></div>
<div style="position:absolute;left:143px;top:515px;width:217px;height:1px;background:#e3e3e3"></div>
<div style="position:absolute;left:143px;top:632px;width:217px;height:1px;background:#e3e3e3"></div>
<span style="position:absolute;left:147.0px;top:376px;font-size:12px;line-height:12px;color:#333333;font-weight:400;transform:scaleX(0.9693);transform-origin:0 0;">Set as Construction</span>
<span style="position:absolute;left:147.0px;top:398px;font-size:12px;line-height:12px;color:#333333;font-weight:400;transform:scaleX(0.9800);transform-origin:0 0;">Create Part from Body</span>
<span style="position:absolute;left:147.0px;top:420px;font-size:12px;line-height:12px;color:#333333;font-weight:400;transform:scaleX(0.9859);transform-origin:0 0;">Convert to Sheet Metal</span>
<span style="position:absolute;left:147.0px;top:442px;font-size:12px;line-height:12px;color:#333333;font-weight:400;transform:scaleX(0.9749);transform-origin:0 0;">Copy Snapshot</span>
<span style="position:absolute;left:147.0px;top:464px;font-size:12px;line-height:12px;color:#333333;font-weight:400;transform:scaleX(0.9636);transform-origin:0 0;">Show Snapshot</span>
<span style="position:absolute;left:147.0px;top:494px;font-size:12px;line-height:12px;color:#333333;font-weight:400;transform:scaleX(1.0351);transform-origin:0 0;">Copy</span>
<span style="position:absolute;left:147.0px;top:524px;font-size:12px;line-height:12px;color:#333333;font-weight:400;transform:scaleX(0.9874);transform-origin:0 0;">Assign Material</span>
<span style="position:absolute;left:147.0px;top:546px;font-size:12px;line-height:12px;color:#333333;font-weight:400;transform:scaleX(0.9596);transform-origin:0 0;">Mass Properties Settings</span>
<span style="position:absolute;left:147.0px;top:568px;font-size:12px;line-height:12px;color:#333333;font-weight:400;transform:scaleX(0.9511);transform-origin:0 0;">Parameters</span>
<span style="position:absolute;left:147.0px;top:590px;font-size:12px;line-height:12px;color:#333333;font-weight:400;transform:scaleX(0.9480);transform-origin:0 0;">Rename</span>
<span style="position:absolute;left:147.0px;top:612px;font-size:12px;line-height:12px;color:#333333;font-weight:400;transform:scaleX(0.9457);transform-origin:0 0;">Reference Viewer</span>
<span style="position:absolute;left:147.0px;top:642px;font-size:12px;line-height:12px;color:#333333;font-weight:400;transform:scaleX(0.9879);transform-origin:0 0;">Customize</span>
<span style="position:absolute;left:309.5px;top:494px;font-size:12px;line-height:12px;color:#333333;font-weight:400;">Ctrl+C</span>
<span style="position:absolute;left:309.0px;top:590px;font-size:12px;line-height:12px;color:#333333;font-weight:400;transform:scaleX(0.8562);transform-origin:0 0;">F2</span>
<svg style="position:absolute;left:119px;top:418px;" width="17" height="17" viewBox="0 0 17 17"><path d="M0.5 3 L3 0.5 H8 V5 L5.5 7.5 H0.5 Z" fill="#8fd3f2" stroke="#2a8fc2" stroke-width="0.9"/><path d="M7 8 L10 11 M10 8.5 V11 H7.5" fill="none" stroke="#222" stroke-width="0.9"/><path d="M10 10 L12.5 8 H16 V13 L13.5 15.5 H10 Z" fill="#9be08a" stroke="#3f9c2c" stroke-width="0.9"/></svg>
<svg style="position:absolute;left:119px;top:440px;" width="17" height="16" viewBox="0 0 17 16"><path d="M0.5 6 V2 Q5 -0.5 10.5 2 V5" fill="none" stroke="#aaa" stroke-width="0.9"/><path d="M4 14 V6 Q9.5 3.5 15.5 6 V14 Q9.5 11.5 4 14 Z" fill="#fff" stroke="#7b4bb0" stroke-width="1.1"/></svg>
<svg style="position:absolute;left:119px;top:462px;" width="17" height="17" viewBox="0 0 17 17"><path d="M0.5 6 V2 Q5 -0.5 10.5 2 V5" fill="none" stroke="#aaa" stroke-width="0.9"/><path d="M4 14 V6 Q9.5 3.5 15.5 6 V14 Q9.5 11.5 4 14 Z" fill="#fff" stroke="#7b4bb0" stroke-width="1.1"/><ellipse cx="10.5" cy="13.5" rx="4.5" ry="2.6" fill="#333"/><circle cx="10.5" cy="13.5" r="1" fill="#fff"/></svg>
<svg style="position:absolute;left:119px;top:492px;" width="16" height="16" viewBox="0 0 16 16"><path d="M0.5 0.5 H6.5 L8.5 2.5 V11.5 H0.5 Z" fill="#f4f4f4" stroke="#909090"/><path d="M2 4.5 H6.5 M2 6.5 H6.5 M2 8.5 H6.5" stroke="#b5b5b5" stroke-width="0.8"/><path d="M7.5 5.5 H13 L15.5 8 V16 H7.5 Z" fill="#ffffff" stroke="#1d6f9a"/><path d="M9.5 9.5 H13.5 M9.5 11.5 H13.5 M9.5 13.5 H13.5" stroke="#2b8fc4"/></svg>
<svg style="position:absolute;left:119px;top:522px;" width="16" height="16" viewBox="0 0 16 16"><path d="M3 0.5 Q0 3 2 5 Q3 6 1 9 L5 13.5 H15.5 V8.5 H5 L1 9" fill="none" stroke="#444" stroke-width="0.9"/></svg>
<svg style="position:absolute;left:119px;top:543px;" width="16" height="17" viewBox="0 0 16 17"><rect x="6" y="0.5" width="4" height="3" fill="none" stroke="#444" stroke-width="0.9"/><path d="M3 3.5 H13 L15.5 12 Q10 10 5 14 L0.5 12 Z" fill="#8fd3f2" stroke="#2a8fc2" stroke-width="0.8"/><path d="M6 10 H15.5 V15.5 H7" fill="#fff" stroke="#444" stroke-width="0.8"/></svg>
<svg style="position:absolute;left:120px;top:566px;" width="14" height="16" viewBox="0 0 14 16"><path d="M4.5 1 Q1.5 1.5 1.8 8 Q1.5 14.5 4.5 15 M9.5 1 Q12.5 1.5 12.2 8 Q12.5 14.5 9.5 15" fill="none" stroke="#333" stroke-width="1.8"/></svg>
<svg style="position:absolute;left:119px;top:588px;" width="16" height="16" viewBox="0 0 16 16"><rect x="0.5" y="0.5" width="9" height="6" fill="#fff" stroke="#aaa" stroke-width="0.8"/><path d="M4 6 H15.5 V15.5 H4 Z" fill="#777"/><rect x="6" y="6.5" width="7" height="4" fill="#eee"/><rect x="7" y="12" width="5" height="3.5" fill="#bfe3f3"/></svg>
<svg style="position:absolute;left:119px;top:609px;" width="17" height="17" viewBox="0 0 17 17"><path d="M1 16 L13 4" stroke="#333" stroke-width="1"/><circle cx="4" cy="12.5" r="1.6" fill="#fff" stroke="#333" stroke-width="0.9"/><circle cx="6.8" cy="9.8" r="1.6" fill="#fff" stroke="#333" stroke-width="0.9"/><circle cx="9.6" cy="7" r="1.6" fill="#fff" stroke="#333" stroke-width="0.9"/><rect x="11" y="0" width="6" height="7" rx="1" fill="#1a6f9a"/><path d="M14 2 V2.5 M14 3.5 V6" stroke="#fff" stroke-width="1.1"/></svg>
<svg style="position:absolute;left:351px;top:525px;" width="5" height="9" viewBox="0 0 5 9"><path d="M0 0 L4.5 4.5 L0 9 Z" fill="#444"/></svg>
<div style="position:absolute;left:147px;top:505px;width:8px;height:1px;background:#444"></div>
<div style="position:absolute;left:147px;top:557px;width:10px;height:1px;background:#444"></div>
<div style="position:absolute;left:201px;top:623px;width:8px;height:1px;background:#444"></div>
<svg style="position:absolute;left:118px;top:271px;" width="16" height="16" viewBox="0 0 16 16"><path d="M7.5 3.5 L10.5 0.5 H15.5 V8.5 L12.5 11.5 Z" fill="#9fd6ee" stroke="#2a8fc2" stroke-width="0.9"/><path d="M7.5 3.5 L10.5 0.5 H15.5 L12.5 3.5 Z" fill="#d8f3fc" stroke="#2a8fc2" stroke-width="0.9"/><rect x="7.5" y="3.5" width="5" height="8" fill="#fff" stroke="#2a8fc2" stroke-width="0.9"/><circle cx="5.5" cy="10.5" r="5.2" fill="url(#gsph2)" stroke="#3a9ccc" stroke-width="0.7"/></svg>
<svg style="position:absolute;left:142px;top:271px;" width="16" height="16" viewBox="0 0 16 16"><path d="M6 4 L9 1 H15 V8 L12 11 H6 Z" fill="#f0f0f0" stroke="#ccc" stroke-width="1"/><circle cx="5.5" cy="10.5" r="5" fill="url(#gsphw)"/><path d="M5.5 10.5 V5.5 A5 5 0 0 1 10.5 10.5 Z" fill="#3d9bd2"/></svg>
<svg style="position:absolute;left:166px;top:271px;" width="16" height="16" viewBox="0 0 16 16"><path d="M6 4 L9 1 H15 V8 L12 11 H6 Z" fill="#c9effc" stroke="#2a8fc2" stroke-width="1"/><circle cx="5.5" cy="10.5" r="5" fill="url(#gsphw)"/></svg>
<svg style="position:absolute;left:190px;top:271px;" width="16" height="16" viewBox="0 0 16 16"><path d="M8.5 3 L11 0.5 H15.5 V6 L13 8.5 H8.5 Z" fill="#d8f3fc" stroke="#2a8fc2" stroke-width="0.9"/><rect x="8.5" y="3" width="4.5" height="5.5" fill="#fff" stroke="#2a8fc2" stroke-width="0.9"/><path d="M0.5 7.5 L4 4 H8 V8.5 H13 L10 12 V13 L7 15.5 H0.5 Z" fill="#bfe6f6" stroke="#2a8fc2" stroke-width="0.9"/><path d="M3.5 8 L5.5 6 V11 H10.5 L8.5 13 H3.5 Z" fill="#6f95ab"/><path d="M4.5 11.5 H9" stroke="#e8e8e8" stroke-width="1"/></svg>
<svg style="position:absolute;left:118px;top:298px;" width="16" height="16" viewBox="0 0 16 16"><path d="M0.5 3 Q8 -1 14 3 V9 Q8 7 3 10 Q1 12 0.5 14 Z" fill="#f3eefa" stroke="#7b4bb0" stroke-width="1"/><path d="M4 7 H11" stroke="#333" stroke-width="1.2" stroke-dasharray="1 1"/><path d="M11 4.5 L14.5 7 L11 9.5 Z" fill="#333"/></svg>
<svg style="position:absolute;left:142px;top:298px;" width="16" height="16" viewBox="0 0 16 16"><path d="M0.5 2 L2 0.5 H15.5 V14 L14 15.5 H0.5 Z" fill="#fff" stroke="#aaa"/><path d="M15.5 0.5 V15.5 H0.5" fill="none" stroke="#7b4bb0" stroke-width="1.1"/><rect x="3" y="4" width="2.5" height="2.5" fill="#7b4bb0"/><rect x="9" y="4" width="2.5" height="2.5" fill="#7b4bb0"/><rect x="3" y="10" width="2.5" height="2.5" fill="#7b4bb0"/><rect x="9" y="10" width="2.5" height="2.5" fill="#7b4bb0"/></svg>
<svg style="position:absolute;left:166px;top:298px;" width="16" height="16" viewBox="0 0 16 16"><path d="M1.5 15.5 V1 Q6.5 2 6.5 8 V15.5 Z M14.5 15.5 V1 Q9.5 2 9.5 8 V15.5 Z" fill="#fdfcff" stroke="#7b4bb0" stroke-width="0.9"/><path d="M1.5 1 V15.5 M14.5 1 V15.5" stroke="#7b4bb0" stroke-width="1.3"/><path d="M8 0 V16" stroke="#999" stroke-width="0.8"/></svg>
<svg style="position:absolute;left:190px;top:298px;" width="16" height="16" viewBox="0 0 16 16"><path d="M0.5 4 L3.5 1 H14.5 V10 L11.5 13 H0.5 Z" fill="#c9effc" stroke="#2a8fc2"/><rect x="0.5" y="4" width="11" height="11" fill="#fff" stroke="#2a8fc2"/><rect x="6" y="10" width="10" height="3" fill="#333"/></svg>
<svg style="position:absolute;left:118px;top:325px;" width="16" height="16" viewBox="0 0 16 16"><path d="M1 0.5 V13 L4 10 L6 14" fill="none" stroke="#999" stroke-width="0.9"/><circle cx="9" cy="9" r="4" fill="#e8f6fc" stroke="#2a8fc2" stroke-width="1.1"/><path d="M12 12 L15.5 15.5" stroke="#888" stroke-width="1.6"/></svg>
<svg style="position:absolute;left:142px;top:325px;" width="16" height="16" viewBox="0 0 16 16"><ellipse cx="8" cy="9" rx="7" ry="4" fill="#444"/><circle cx="8" cy="9" r="1.3" fill="#fff"/><path d="M1 1 L15 15.5" stroke="#fafafa" stroke-width="2.2"/><path d="M1 1 L15 15.5" stroke="#222" stroke-width="1"/></svg>
<svg style="position:absolute;left:166px;top:325px;" width="16" height="16" viewBox="0 0 16 16"><rect x="0.5" y="0.5" width="15" height="15" fill="none" stroke="#1a5f86" stroke-width="1.2" stroke-dasharray="2.5 2"/><ellipse cx="8" cy="8" rx="6.5" ry="3.8" fill="#444"/><circle cx="8" cy="8" r="1.3" fill="#fff"/></svg>
<svg style="position:absolute;left:190px;top:325px;" width="16" height="16" viewBox="0 0 16 16"><rect x="0.5" y="0.5" width="15" height="15" fill="none" stroke="#1a5f86" stroke-width="1.2" stroke-dasharray="2.5 2"/><ellipse cx="8" cy="8" rx="6.5" ry="3.8" fill="#444"/><path d="M2 1.5 L14 14.5" stroke="#fafafa" stroke-width="2"/><path d="M2 1.5 L14 14.5" stroke="#222" stroke-width="0.9"/></svg>
<svg style="position:absolute;left:215px;top:325px;" width="16" height="16" viewBox="0 0 16 16"><path d="M0.5 4 L4 0.5 H15.5 V12 L12 15.5 H0.5 Z" fill="#d0effb" stroke="#2a8fc2" stroke-width="0.9"/><path d="M0.5 4 H12 V15.5 M12 4 L15.5 0.5 M4 0.5 V12 H15.5 M4 12 L0.5 15.5" fill="none" stroke="#6cc0e2" stroke-width="0.8"/></svg>
<svg style="position:absolute;left:164px;top:498px;" width="30" height="42" viewBox="0 0 30 42"><path d="M2 2 V33 L9.5 26 L15 38.5 L21 35.5 L15.5 24 H25.5 Z" fill="#f2f2f2" stroke="#000" stroke-width="2.2" stroke-linejoin="round"/></svg>
<svg width="0" height="0" style="position:absolute"><defs><linearGradient id="grep" x1="0" y1="0" x2="1" y2="1"><stop offset="0" stop-color="#ffffff"/><stop offset="1" stop-color="#7cc2e0"/></linearGradient><radialGradient id="gsphd" cx="0.35" cy="0.3" r="0.75"><stop offset="0" stop-color="#ffffff"/><stop offset="1" stop-color="#8a8a8a"/></radialGradient><linearGradient id="gbox2" x1="0" y1="0" x2="1" y2="1"><stop offset="0" stop-color="#f4f4f4"/><stop offset="1" stop-color="#9a9a9a"/></linearGradient><linearGradient id="gsty2" x1="0" y1="0" x2="1" y2="0"><stop offset="0" stop-color="#bcbcbc"/><stop offset="0.5" stop-color="#e6e6e6"/><stop offset="1" stop-color="#c6c6c6"/></linearGradient></defs></svg>
<svg style="position:absolute;left:894px;top:177px;" width="16" height="16" viewBox="0 0 16 16"><rect x="0.5" y="0.5" width="14" height="13" fill="#fafafa" stroke="#a0a0a0"/><circle cx="7" cy="7" r="4" fill="#e6f6fd" stroke="#2a8fc2" stroke-width="1.1"/><path d="M10 10 L14.5 15" stroke="#a0a0a0" stroke-width="2.2"/></svg>
<svg style="position:absolute;left:920px;top:177px;" width="16" height="16" viewBox="0 0 16 16"><circle cx="6" cy="6" r="5" fill="#f3fbff" stroke="#2a8fc2" stroke-width="1.1"/><path d="M6 3 V9 M3 6 H9" stroke="#1a6f9a" stroke-width="1.8"/><path d="M9.5 9.5 L14.5 15" stroke="#a0a0a0" stroke-width="2.4"/></svg>
<svg style="position:absolute;left:946px;top:177px;" width="16" height="16" viewBox="0 0 16 16"><circle cx="6" cy="6" r="5" fill="#f3fbff" stroke="#2a8fc2" stroke-width="1.1"/><path d="M3 6 H9" stroke="#1a6f9a" stroke-width="1.8"/><path d="M9.5 9.5 L14.5 15" stroke="#a0a0a0" stroke-width="2.4"/></svg>
<svg style="position:absolute;left:972px;top:177px;" width="16" height="16" viewBox="0 0 16 16"><rect x="0.5" y="0.5" width="15" height="15" fill="url(#grep)" stroke="#9a9a9a"/><path d="M3 14 L14 3" stroke="#1a6f9a" stroke-width="1.6"/></svg>
<svg style="position:absolute;left:998px;top:177px;" width="16" height="16" viewBox="0 0 16 16"><path d="M7 5 L10 1 H16 V9 L13 12 H7 Z" fill="url(#gbox2)"/><circle cx="5.5" cy="10.5" r="5" fill="url(#gsphd)"/><path d="M13 16 L16 13 V16 Z" fill="#444"/></svg>
<svg style="position:absolute;left:1024px;top:177px;" width="16" height="16" viewBox="0 0 16 16"><path d="M0.5 4.5 L4 1 H15.5 V12 L12 15.5 H0.5 Z" fill="#8fd0ec" stroke="#1a6f9a" stroke-width="1.1"/><rect x="0.5" y="4.5" width="11.5" height="11" fill="#fff" stroke="#1a6f9a" stroke-width="1.1"/><path d="M12 4.5 L15.5 1" stroke="#1a6f9a"/><path d="M15 16 L18 13 V16 Z" fill="#444"/></svg>
<svg style="position:absolute;left:1050px;top:177px;" width="16" height="16" viewBox="0 0 16 16"><path d="M0.5 6 L4 1 H12 L15.5 6 L12 11 H4 Z" fill="#d6f0fb" stroke="#3d9bc7"/><path d="M10 1 L13 6 V12 H7" fill="#8fd0ec"/><rect x="9" y="9" width="5" height="7" fill="#fff" stroke="#777" stroke-width="0.8"/><path d="M15 16 L18 13 V16 Z" fill="#444"/></svg>
<svg style="position:absolute;left:1076px;top:177px;" width="16" height="16" viewBox="0 0 16 16"><rect x="0.5" y="0.5" width="11" height="12" fill="#fff" stroke="#aaa" stroke-width="0.8"/><path d="M0.5 4 H11.5 M0.5 7 H11.5 M4 0.5 V12" stroke="#bbb" stroke-width="0.8"/><rect x="6" y="8" width="10" height="7" rx="1" fill="#4a4a4a"/><rect x="9" y="6.5" width="4" height="2" fill="#4a4a4a"/><circle cx="11" cy="11.5" r="2.2" fill="#fff"/><circle cx="11" cy="11.5" r="1.2" fill="#333"/></svg>
<svg style="position:absolute;left:1102px;top:177px;" width="16" height="16" viewBox="0 0 16 16"><path d="M0.5 4 L4 1 H15.5 V11 L12 15 L4 14 L0.5 11 Z" fill="url(#gsty)" stroke="#66b0d4" stroke-width="0.9"/><path d="M4 4 H12 V12 M12 4 L15.5 1" fill="none" stroke="#66b0d4" stroke-width="0.8"/></svg>
<svg style="position:absolute;left:1128px;top:177px;" width="16" height="16" viewBox="0 0 16 16"><path d="M2 4 L5 1 H12 V13 H2 Z" fill="#d6f0fb" stroke="#9ad0e8" stroke-width="0.8"/><path d="M12 4 V13 H5" fill="none" stroke="#999" stroke-width="0.8" stroke-dasharray="1 1"/><path d="M0.5 15 L15 1" stroke="#1a6f9a" stroke-width="1.5"/><path d="M15 16 L18 13 V16 Z" fill="#444"/></svg>
<svg style="position:absolute;left:1154px;top:177px;" width="16" height="16" viewBox="0 0 16 16"><path d="M0.5 0.5 L4 4 M4 0.5 L0.5 4" stroke="#8a6a2a" stroke-width="1.2"/><path d="M10 0.5 L8.5 3 M7.5 5 L6 8 M5 10 L3.5 13" stroke="#8a6a2a" stroke-width="1.3"/><path d="M9.5 6 V13 H15 M9.5 13 L7 15.5" fill="none" stroke="#333" stroke-width="1.1"/><path d="M15 16 L18 13 V16 Z" fill="#444"/></svg>
<svg style="position:absolute;left:1180px;top:177px;" width="16" height="16" viewBox="0 0 16 16"><rect x="0.5" y="0.5" width="9" height="6" fill="#fff3da" stroke="#888" stroke-width="0.8"/><path d="M9.5 3 H14 V8 M12 6 L14 8.5 L16 6" fill="none" stroke="#333" stroke-width="1"/><ellipse cx="11.5" cy="13" rx="4.5" ry="2.5" fill="#333"/><circle cx="11.5" cy="13" r="1" fill="#fff"/></svg>
<svg style="position:absolute;left:1206px;top:177px;" width="16" height="16" viewBox="0 0 16 16"><path d="M3 3 L8 8 L14 9 M8 8 L3 14" stroke="#333" stroke-width="1"/><circle cx="3" cy="3" r="2.5" fill="#6cb86a"/><circle cx="14" cy="9" r="2.5" fill="#e07a7a"/><circle cx="3" cy="14" r="2.5" fill="#3d8fc2"/></svg>
<svg style="position:absolute;left:1232px;top:177px;" width="16" height="16" viewBox="0 0 16 16"><path d="M8 2 L14.5 13.5 H1.5 Z" fill="none" stroke="#bdbdbd" stroke-width="2.4" stroke-linejoin="round"/><path d="M10.5 9.5 L15.5 12.5 L10.5 15.5 Z" fill="#e6e6e6" stroke="#c4c4c4" stroke-width="0.8"/></svg>
<svg style="position:absolute;left:1258px;top:177px;" width="16" height="16" viewBox="0 0 16 16"><rect x="2" y="1" width="3.5" height="13" fill="#aaa"/><rect x="9" y="1" width="3.5" height="13" fill="#aaa"/></svg>
<svg style="position:absolute;left:1284px;top:177px;" width="16" height="16" viewBox="0 0 16 16"><path d="M0 2 H16 V13 H2 Q7 9 2 5 H0 Z" fill="url(#gsty2)"/></svg>
<div style="position:absolute;left:6px;top:1052px;width:22px;height:24px;background:#e2e4e4;border:1px solid #c4c8c8;box-sizing:border-box"></div>
<svg style="position:absolute;left:9px;top:1055px;" width="17" height="17" viewBox="0 0 17 17"><rect x="0.5" y="0.5" width="14" height="14" fill="#fff" stroke="#8a8a8a"/><path d="M0.5 3 H14.5" stroke="#8a8a8a"/><rect x="1" y="4" width="4" height="11" fill="#cfe9f5" stroke="#1a6f9a" stroke-width="0.8"/><ellipse cx="11.5" cy="12.5" rx="4.5" ry="2.5" fill="#444"/><circle cx="11.5" cy="12.5" r="1" fill="#fff"/></svg>
<svg style="position:absolute;left:35px;top:1055px;" width="17" height="17" viewBox="0 0 17 17"><circle cx="8.5" cy="8.5" r="6.5" fill="url(#gsph3)"/><ellipse cx="8.5" cy="8.5" rx="9" ry="4.2" transform="rotate(-40 8.5 8.5)" fill="none" stroke="#3a3a3a" stroke-width="0.9"/></svg>
<svg style="position:absolute;left:61px;top:1056px;" width="16" height="16" viewBox="0 0 16 16"><rect x="0.5" y="0.5" width="15" height="15" rx="1" fill="url(#gsq)" stroke="#1a6f9a" stroke-width="1"/></svg>
<svg width="0" height="0" style="position:absolute"><defs><linearGradient id="gsq" x1="0" y1="0" x2="0" y2="1"><stop offset="0" stop-color="#ffffff"/><stop offset="1" stop-color="#cfe3ee"/></linearGradient></defs></svg>
<div style="position:absolute;left:89px;top:1052px;width:1px;height:24px;background:#b5b9b9"></div>
<div style="position:absolute;left:1531px;top:1050px;width:1px;height:27px;background:#b5b9b9"></div>
<div style="position:absolute;left:1536px;top:1050px;width:1px;height:27px;background:#b5b9b9"></div>
<svg style="position:absolute;left:1543px;top:1056px;" width="16" height="16" viewBox="0 0 16 16"><rect x="1" y="1" width="5" height="4" fill="#666"/><rect x="10" y="1" width="5" height="4" fill="#666"/><rect x="0" y="5" width="7" height="10" rx="1" fill="#444"/><rect x="9" y="5" width="7" height="10" rx="1" fill="#444"/><rect x="6" y="6" width="4" height="4" fill="#555"/></svg>
<svg style="position:absolute;left:1566px;top:1062px;" width="7" height="4" viewBox="0 0 7 4"><path d="M0 0 L7 0 L3.5 4 Z" fill="#444"/></svg>
<div style="position:absolute;left:1580px;top:1050px;width:1px;height:27px;background:#b5b9b9"></div>
<svg style="position:absolute;left:1587px;top:1056px;" width="15" height="13" viewBox="0 0 15 13"><rect x="0.5" y="0.5" width="14" height="12" fill="none" stroke="#333" stroke-dasharray="2.5 2"/></svg>
<svg style="position:absolute;left:1609px;top:1062px;" width="7" height="4" viewBox="0 0 7 4"><path d="M0 0 L7 0 L3.5 4 Z" fill="#444"/></svg>
<div style="position:absolute;left:1627px;top:1056px;width:16px;height:16px;background:#c9e9f8;border:1px dashed #1a6f9a;box-sizing:border-box"></div>
<svg style="position:absolute;left:1627px;top:1056px;" width="16" height="16" viewBox="0 0 16 16"><ellipse cx="6" cy="5" rx="4" ry="2.5" fill="none" stroke="#444" stroke-width="1"/><circle cx="6" cy="5" r="1" fill="#444"/><path d="M9 7 V15 L11 13 L13 16 L14 15 L12.5 12 H15 Z" fill="#fff" stroke="#333" stroke-width="0.8"/></svg>
<svg style="position:absolute;left:1889px;top:1062px;" width="8" height="4" viewBox="0 0 8 4"><path d="M0 0 L8 0 L4.0 4 Z" fill="#444"/></svg>
</body></html>
